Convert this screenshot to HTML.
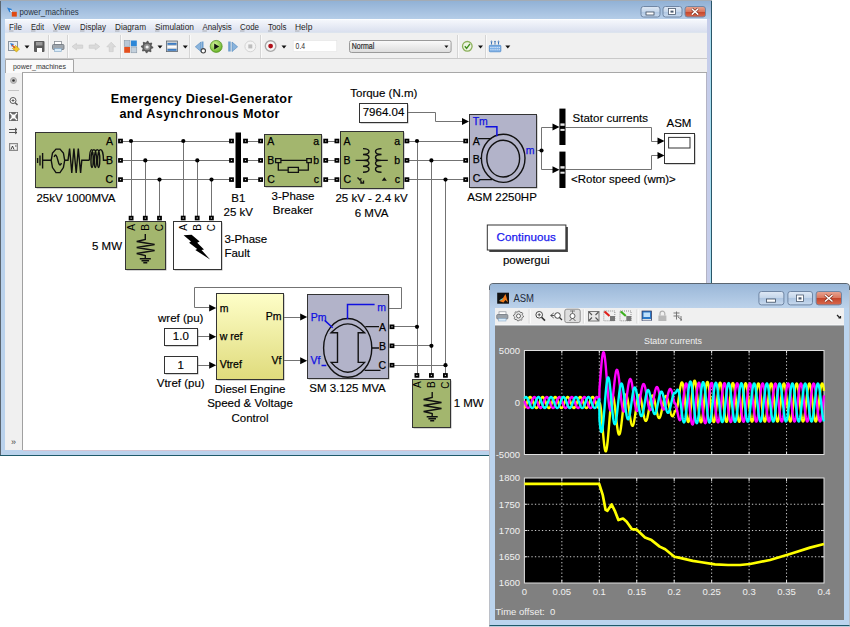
<!DOCTYPE html>
<html><head><meta charset="utf-8">
<style>
*{margin:0;padding:0}
html,body{width:850px;height:627px;overflow:hidden;background:#fff}
svg{position:absolute;left:0;top:0}
svg text{font-family:"Liberation Sans",sans-serif}
</style></head><body>
<svg width="850" height="627" viewBox="0 0 850 627">
<defs>
<linearGradient id="tg" x1="0" y1="0" x2="0" y2="1"><stop offset="0" stop-color="#91b1d5"/><stop offset="1" stop-color="#b5cde8"/></linearGradient>
<linearGradient id="mg" x1="0" y1="0" x2="0" y2="1"><stop offset="0" stop-color="#f7f9fd"/><stop offset="1" stop-color="#d9dfee"/></linearGradient>
<linearGradient id="bg" x1="0" y1="0" x2="0" y2="1"><stop offset="0" stop-color="#dfe9f5"/><stop offset="0.5" stop-color="#c3d5ea"/><stop offset="0.51" stop-color="#aec6e2"/><stop offset="1" stop-color="#c9daee"/></linearGradient>
<linearGradient id="rg" x1="0" y1="0" x2="0" y2="1"><stop offset="0" stop-color="#e9a693"/><stop offset="0.5" stop-color="#d9755c"/><stop offset="0.51" stop-color="#c4462b"/><stop offset="1" stop-color="#d96a4f"/></linearGradient>
<linearGradient id="cbg" x1="0" y1="0" x2="0" y2="1"><stop offset="0" stop-color="#fbfbfb"/><stop offset="1" stop-color="#dcdcdc"/></linearGradient>
<radialGradient id="grn" cx="0.4" cy="0.35" r="0.7"><stop offset="0" stop-color="#d8f5a0"/><stop offset="1" stop-color="#5fae1e"/></radialGradient>
</defs>
<rect x="0.5" y="0.5" width="711" height="455" fill="#bad2ec" stroke="#5b6671"/>
<line x1="0" y1="455.5" x2="712" y2="455.5" stroke="#1e5a6a"/>
<rect x="707" y="19" width="3.5" height="431" fill="#c6cdea"/><line x1="710.5" y1="19" x2="710.5" y2="455" stroke="#a6dcef"/><line x1="711.5" y1="0" x2="711.5" y2="456" stroke="#2a5568"/>
<rect x="1" y="1" width="710" height="18" fill="url(#tg)"/>
<line x1="0" y1="0.5" x2="712" y2="0.5" stroke="#a3abb4"/>
<path d="M7,7.5 L12,9 L9.5,12.5 Z" fill="#2a7fd4"/><line x1="10" y1="10" x2="13" y2="13" stroke="#fff" stroke-width="1"/><rect x="11.8" y="11.8" width="5" height="4.8" fill="#e04a12"/>
<text x="19.4" y="14.6" font-size="9.3" fill="#2a3440" text-anchor="start" font-weight="normal" textLength="59.4" lengthAdjust="spacingAndGlyphs" >power_machines</text>
<rect x="641.0" y="6.5" width="19.0" height="10.5" rx="2.5" fill="url(#bg)" stroke="#6f86a4"/>
<rect x="646" y="12" width="8" height="3" fill="#fff" stroke="#3b4a5e" stroke-width="0.8"/>
<rect x="663.0" y="6.5" width="19.0" height="10.5" rx="2.5" fill="url(#bg)" stroke="#6f86a4"/>
<rect x="668.5" y="8.5" width="7" height="6" fill="#fff" stroke="#4b5a6e" stroke-width="0.8"/><rect x="670.5" y="10.6" width="3" height="2" fill="#4b5a6e"/>
<rect x="685.0" y="6.5" width="20.5" height="10.5" rx="2.5" fill="url(#rg)" stroke="#6f86a4"/>
<path d="M691.8,8.8 L698.2,14.6 M698.2,8.8 L691.8,14.6" stroke="#7a3020" stroke-width="2.8"/><path d="M691.8,8.8 L698.2,14.6 M698.2,8.8 L691.8,14.6" stroke="#fff" stroke-width="1.5"/>
<rect x="5" y="19" width="702" height="13.5" fill="url(#mg)"/>
<line x1="5" y1="19.5" x2="707" y2="19.5" stroke="#fdfdfe"/>
<text x="9" y="29.8" font-size="9.6" fill="#262626" text-anchor="start" font-weight="normal" textLength="13" lengthAdjust="spacingAndGlyphs" >File</text>
<line x1="9" y1="31" x2="13.5" y2="31" stroke="#888" stroke-width="0.6"/>
<text x="31" y="29.8" font-size="9.6" fill="#262626" text-anchor="start" font-weight="normal" textLength="13" lengthAdjust="spacingAndGlyphs" >Edit</text>
<line x1="31" y1="31" x2="35.5" y2="31" stroke="#888" stroke-width="0.6"/>
<text x="53" y="29.8" font-size="9.6" fill="#262626" text-anchor="start" font-weight="normal" textLength="17" lengthAdjust="spacingAndGlyphs" >View</text>
<line x1="53" y1="31" x2="57.5" y2="31" stroke="#888" stroke-width="0.6"/>
<text x="80" y="29.8" font-size="9.6" fill="#262626" text-anchor="start" font-weight="normal" textLength="26" lengthAdjust="spacingAndGlyphs" >Display</text>
<line x1="80" y1="31" x2="84.5" y2="31" stroke="#888" stroke-width="0.6"/>
<text x="115" y="29.8" font-size="9.6" fill="#262626" text-anchor="start" font-weight="normal" textLength="31" lengthAdjust="spacingAndGlyphs" >Diagram</text>
<line x1="115" y1="31" x2="119.5" y2="31" stroke="#888" stroke-width="0.6"/>
<text x="155" y="29.8" font-size="9.6" fill="#262626" text-anchor="start" font-weight="normal" textLength="39" lengthAdjust="spacingAndGlyphs" >Simulation</text>
<line x1="155" y1="31" x2="159.5" y2="31" stroke="#888" stroke-width="0.6"/>
<text x="202.4" y="29.8" font-size="9.6" fill="#262626" text-anchor="start" font-weight="normal" textLength="29.3" lengthAdjust="spacingAndGlyphs" >Analysis</text>
<line x1="202.4" y1="31" x2="206.9" y2="31" stroke="#888" stroke-width="0.6"/>
<text x="240" y="29.8" font-size="9.6" fill="#262626" text-anchor="start" font-weight="normal" textLength="19" lengthAdjust="spacingAndGlyphs" >Code</text>
<line x1="240" y1="31" x2="244.5" y2="31" stroke="#888" stroke-width="0.6"/>
<text x="268" y="29.8" font-size="9.6" fill="#262626" text-anchor="start" font-weight="normal" textLength="18.4" lengthAdjust="spacingAndGlyphs" >Tools</text>
<line x1="268" y1="31" x2="272.5" y2="31" stroke="#888" stroke-width="0.6"/>
<text x="295" y="29.8" font-size="9.6" fill="#262626" text-anchor="start" font-weight="normal" textLength="17.4" lengthAdjust="spacingAndGlyphs" >Help</text>
<line x1="295" y1="31" x2="299.5" y2="31" stroke="#888" stroke-width="0.6"/>
<rect x="5" y="32.5" width="702" height="26.5" fill="#f0f0f0"/>
<line x1="5" y1="58.5" x2="707" y2="58.5" stroke="#c9c9c9"/>
<line x1="48.5" y1="35" x2="48.5" y2="58" stroke="#d5d5d5"/><line x1="49.5" y1="35" x2="49.5" y2="58" stroke="#fafafa"/>
<line x1="67.5" y1="35" x2="67.5" y2="58" stroke="#d5d5d5"/><line x1="68.5" y1="35" x2="68.5" y2="58" stroke="#fafafa"/>
<line x1="120.5" y1="35" x2="120.5" y2="58" stroke="#d5d5d5"/><line x1="121.5" y1="35" x2="121.5" y2="58" stroke="#fafafa"/>
<line x1="189.5" y1="35" x2="189.5" y2="58" stroke="#d5d5d5"/><line x1="190.5" y1="35" x2="190.5" y2="58" stroke="#fafafa"/>
<line x1="260.5" y1="35" x2="260.5" y2="58" stroke="#d5d5d5"/><line x1="261.5" y1="35" x2="261.5" y2="58" stroke="#fafafa"/>
<line x1="457.5" y1="35" x2="457.5" y2="58" stroke="#d5d5d5"/><line x1="458.5" y1="35" x2="458.5" y2="58" stroke="#fafafa"/>
<line x1="485.5" y1="35" x2="485.5" y2="58" stroke="#d5d5d5"/><line x1="486.5" y1="35" x2="486.5" y2="58" stroke="#fafafa"/>
<rect x="8.5" y="41.5" width="9" height="9" fill="#e8eef4" stroke="#8a949e"/><path d="M10,43 L14,44 L12,47 Z" fill="#2f7ed8"/><path d="M12.5,48.5 L15.5,45.5 L19.5,49 L16.5,52 Z" fill="#f2c92a" stroke="#b89210" stroke-width="0.6"/><path d="M12,45 L15,48" stroke="#d9532b" stroke-width="1.2"/>
<path d="M24.5,45.5 h5 l-2.5,3 Z" fill="#111"/>
<rect x="34" y="41" width="10.5" height="11" rx="1" fill="#5b5b5b"/><rect x="36" y="42" width="6.5" height="3.5" fill="#9a9a9a"/><rect x="37" y="48" width="5" height="4" fill="#fff"/>
<rect x="54.5" y="41.5" width="7" height="3.5" fill="#fff" stroke="#8a8f96" stroke-width="0.8"/><rect x="52.5" y="44.5" width="11.5" height="5" rx="1" fill="#9fa6ad" stroke="#6d747b" stroke-width="0.8"/><rect x="54.5" y="48.5" width="7" height="3" fill="#d7eaf8" stroke="#7fa3c4" stroke-width="0.6"/>
<path d="M72,46.6 L76.5,43.3 V45 H82.7 V48.3 H76.5 V50 Z" fill="#dadada" stroke="#c8c8c8" stroke-width="0.6"/>
<path d="M99.8,46.6 L95.3,43.3 V45 H89.2 V48.3 H95.3 V50 Z" fill="#dadada" stroke="#c8c8c8" stroke-width="0.6"/>
<path d="M111.2,42.2 L115.6,46.8 H113.2 V51.6 H109.2 V46.8 H106.8 Z" fill="#dadada" stroke="#c8c8c8" stroke-width="0.6"/>
<rect x="124.2" y="40.5" width="5.8" height="5.8" fill="#b9c7d6" stroke="#7d8c9c" stroke-width="0.5"/><rect x="131" y="40.5" width="5.8" height="5.8" fill="#2c87d8"/><rect x="124.2" y="47" width="5.8" height="5.8" fill="#e4501e"/><rect x="131" y="47" width="5.8" height="5.8" fill="#c3d0dc" stroke="#7d8c9c" stroke-width="0.5"/>
<polygon points="153.30,47.00 153.18,48.21 151.53,48.84 151.09,49.67 151.48,51.38 150.54,52.16 148.94,51.43 148.04,51.71 147.10,53.20 145.89,53.08 145.26,51.43 144.43,50.99 142.72,51.38 141.94,50.44 142.67,48.84 142.39,47.94 140.90,47.00 141.02,45.79 142.67,45.16 143.11,44.33 142.72,42.62 143.66,41.84 145.26,42.57 146.16,42.29 147.10,40.80 148.31,40.92 148.94,42.57 149.77,43.01 151.48,42.62 152.26,43.56 151.53,45.16 151.81,46.06" fill="#5a5a5a"/><circle cx="147.1" cy="47" r="3.2" fill="#8c8c8c"/><circle cx="147.1" cy="47" r="1.6" fill="#f0f0f0"/>
<path d="M157.5,45.5 h5 l-2.5,3 Z" fill="#111"/>
<rect x="166.5" y="41" width="11" height="10.6" fill="#c7cdd3" stroke="#5e6770" stroke-width="0.8"/><rect x="167.5" y="43" width="9" height="1.8" fill="#3d7cc2"/><rect x="167.5" y="46" width="9" height="1.8" fill="#fff"/><rect x="167.5" y="49" width="9" height="1.8" fill="#3d7cc2"/>
<path d="M182.8,45.5 h5 l-2.5,3 Z" fill="#111"/>
<path d="M195.3,46.8 L201,42 V51.6 Z" fill="#8ab4dc" stroke="#4f86bd" stroke-width="0.6"/><rect x="201.5" y="41.5" width="2" height="10" fill="#6e9fcf"/><circle cx="203.3" cy="50.8" r="2.2" fill="#fff" stroke="#444" stroke-width="1.1"/>
<circle cx="216.2" cy="46.4" r="6" fill="url(#grn)" stroke="#4d8c1a" stroke-width="0.7"/><path d="M214.2,43.4 L219.2,46.4 L214.2,49.4 Z" fill="#111"/>
<rect x="228.2" y="41.5" width="2.5" height="10" fill="#6e9fcf"/><path d="M237.6,46.8 L232,42 V51.6 Z" fill="#8ab4dc" stroke="#4f86bd" stroke-width="0.6"/>
<circle cx="250.3" cy="46.4" r="5.4" fill="#f4f4f4" stroke="#d4d4d4" stroke-width="1"/><rect x="248.3" y="44.4" width="4" height="4" fill="#bdbdbd"/>
<circle cx="270.6" cy="46.1" r="5.3" fill="#f6f6f6" stroke="#a8a8a8" stroke-width="1.4"/><circle cx="270.6" cy="46.1" r="2.4" fill="#b0101a"/>
<path d="M281.5,45.5 h5 l-2.5,3 Z" fill="#111"/>
<rect x="293.2" y="40.5" width="43.6" height="11.1" fill="#fff" stroke="#e3e3e3" stroke-width="0.6"/>
<text x="295.6" y="49.2" font-size="8.5" fill="#333" text-anchor="start" font-weight="normal" textLength="9.5" lengthAdjust="spacingAndGlyphs" >0.4</text>
<rect x="349.5" y="40.5" width="101.6" height="12" rx="2" fill="url(#cbg)" stroke="#9a9a9a"/>
<text x="351.8" y="49" font-size="9" fill="#2a2a2a" text-anchor="start" font-weight="normal" textLength="22.5" lengthAdjust="spacingAndGlyphs" stroke="#2a2a2a" stroke-width="0.2">Normal</text>
<path d="M444.4,45.5 h4 l-2,2.4 Z" fill="#111"/>
<circle cx="467.3" cy="46.3" r="4.8" fill="#eef4e4" stroke="#8bb05a" stroke-width="1.3"/><path d="M464.8,46.3 L466.6,48.3 L470,43.8" fill="none" stroke="#3f8f1c" stroke-width="1.4"/>
<path d="M478,45.5 h5 l-2.5,3 Z" fill="#111"/>
<rect x="489.3" y="45.3" width="11.6" height="6.5" rx="0.8" fill="#7fb0e6" stroke="#4a86c8" stroke-width="0.7"/><path d="M491.5,41.5 v3 M495,41.5 v3 M498.5,41.5 v3" stroke="#2a66b0" stroke-width="0.9"/><path d="M490.5,41.8 l1,-0.8 l1,0.8 M494,41.8 l1,-0.8 l1,0.8 M497.5,41.8 l1,-0.8 l1,0.8" stroke="#2a66b0" stroke-width="0.7" fill="none"/><path d="M490.3,47.5 h9.6 M490.3,49.7 h9.6" stroke="#f4f8fd" stroke-width="0.8" stroke-dasharray="1.2,0.9"/>
<path d="M505.3,45.5 h5 l-2.5,3 Z" fill="#111"/>
<rect x="5" y="59" width="702" height="13.5" fill="#f0f0f0"/>
<line x1="5" y1="72.5" x2="707" y2="72.5" stroke="#a5a5a5"/>
<rect x="5.5" y="59.5" width="68" height="13.5" fill="#fafafa"/><path d="M5.5,73 V59.5 H73.5 V72.5" fill="none" stroke="#a5a5a5"/>
<text x="12.9" y="68.5" font-size="8" fill="#333" text-anchor="start" font-weight="normal" textLength="53" lengthAdjust="spacingAndGlyphs" >power_machines</text>
<rect x="5" y="73" width="17" height="377" fill="#f0f0f0"/>
<line x1="22.5" y1="73" x2="22.5" y2="450" stroke="#a0a0a0"/>
<circle cx="13.5" cy="80.5" r="3" fill="#c4c4c4" stroke="#9a9a9a" stroke-width="0.8"/><circle cx="13.5" cy="80.5" r="1.3" fill="#333"/>
<line x1="8" y1="90.5" x2="19" y2="90.5" stroke="#c4c4c4"/>
<circle cx="13" cy="100.5" r="3" fill="#fff" stroke="#555" stroke-width="1"/><line x1="15.2" y1="102.7" x2="17.5" y2="105" stroke="#555" stroke-width="1.4"/><path d="M11.5,100.5 h3 M13,99 v3" stroke="#333" stroke-width="0.7"/>
<rect x="9" y="112" width="9" height="9" fill="#6a6a6a"/><rect x="11.5" y="114.5" width="4" height="4" fill="#fff"/><path d="M10,113 l2,2 M17,113 l-2,2 M10,120 l2,-2 M17,120 l-2,-2" stroke="#fff" stroke-width="1.2"/>
<path d="M9,129.5 h8 M9,132.5 h8 M15,128 l2,1.5 l-2,1.5 M15,131 l2,1.5 l-2,1.5" fill="none" stroke="#444" stroke-width="0.9"/>
<rect x="9" y="143" width="9" height="8" fill="#8a8a8a"/><rect x="10.2" y="144.2" width="6.6" height="5.6" fill="#f4f4f4"/><path d="M11,149.5 l1.5,-3.5 l1.5,3.5 M15,146 h1.5" fill="none" stroke="#333" stroke-width="0.9"/>
<text x="11" y="445" font-size="9" fill="#444" text-anchor="start" font-weight="normal" >&#187;</text>
<rect x="23" y="73" width="684" height="377" fill="#fff"/><line x1="706.5" y1="73" x2="706.5" y2="450" stroke="#b4b4c4"/><line x1="22" y1="72.5" x2="707" y2="72.5" stroke="#a8a8a8"/><line x1="23" y1="450.5" x2="707" y2="450.5" stroke="#d4c4d4"/>
<path d="M120.5,141.5 L231.5,141.5" fill="none" stroke="#737373" stroke-width="1"/>
<path d="M245.5,141.5 L260.5,141.5" fill="none" stroke="#737373" stroke-width="1"/>
<path d="M325.5,141.5 L336.5,141.5" fill="none" stroke="#737373" stroke-width="1"/>
<path d="M406.5,141.5 L465.5,141.5" fill="none" stroke="#737373" stroke-width="1"/>
<path d="M120.5,160.5 L231.5,160.5" fill="none" stroke="#737373" stroke-width="1"/>
<path d="M245.5,160.5 L260.5,160.5" fill="none" stroke="#737373" stroke-width="1"/>
<path d="M325.5,160.5 L336.5,160.5" fill="none" stroke="#737373" stroke-width="1"/>
<path d="M406.5,160.5 L465.5,160.5" fill="none" stroke="#737373" stroke-width="1"/>
<path d="M120.5,179.5 L231.5,179.5" fill="none" stroke="#737373" stroke-width="1"/>
<path d="M245.5,179.5 L260.5,179.5" fill="none" stroke="#737373" stroke-width="1"/>
<path d="M325.5,179.5 L336.5,179.5" fill="none" stroke="#737373" stroke-width="1"/>
<path d="M406.5,179.5 L465.5,179.5" fill="none" stroke="#737373" stroke-width="1"/>
<path d="M131.5,141.5 L131.5,218.5" fill="none" stroke="#737373" stroke-width="1"/>
<path d="M145.5,160.5 L145.5,218.5" fill="none" stroke="#737373" stroke-width="1"/>
<path d="M159.5,179.5 L159.5,218.5" fill="none" stroke="#737373" stroke-width="1"/>
<path d="M183.5,141.5 L183.5,218.5" fill="none" stroke="#737373" stroke-width="1"/>
<path d="M197.5,160.5 L197.5,218.5" fill="none" stroke="#737373" stroke-width="1"/>
<path d="M211.5,179.5 L211.5,218.5" fill="none" stroke="#737373" stroke-width="1"/>
<path d="M417.5,141.5 L417.5,375.5" fill="none" stroke="#737373" stroke-width="1"/>
<path d="M431.5,160.5 L431.5,375.5" fill="none" stroke="#737373" stroke-width="1"/>
<path d="M445.5,179.5 L445.5,375.5" fill="none" stroke="#737373" stroke-width="1"/>
<path d="M392.5,326.5 L417.5,326.5" fill="none" stroke="#737373" stroke-width="1"/>
<path d="M392.5,345.5 L431.5,345.5" fill="none" stroke="#737373" stroke-width="1"/>
<path d="M392.5,365.5 L445.5,365.5" fill="none" stroke="#737373" stroke-width="1"/>
<circle cx="131" cy="141" r="2.1" fill="#000"/>
<circle cx="145.3" cy="160.4" r="2.1" fill="#000"/>
<circle cx="159.5" cy="179.6" r="2.1" fill="#000"/>
<circle cx="183.3" cy="141" r="2.1" fill="#000"/>
<circle cx="197.3" cy="160.4" r="2.1" fill="#000"/>
<circle cx="211.5" cy="179.6" r="2.1" fill="#000"/>
<circle cx="417" cy="141" r="2.1" fill="#000"/>
<circle cx="431.4" cy="160.4" r="2.1" fill="#000"/>
<circle cx="445.5" cy="179.6" r="2.1" fill="#000"/>
<circle cx="417" cy="326.8" r="2.1" fill="#000"/>
<circle cx="431.4" cy="345.8" r="2.1" fill="#000"/>
<circle cx="445.5" cy="365.2" r="2.1" fill="#000"/>
<path d="M407.5,112.5 L435.5,112.5 L435.5,121.5 L462.5,121.5" fill="none" stroke="#737373" stroke-width="1"/>
<path d="M469,121.6 L462,118.1 L462,125.1 Z" fill="#000"/>
<path d="M537.5,150.5 L541.5,150.5" fill="none" stroke="#737373" stroke-width="1"/>
<path d="M541.5,127.5 L541.5,169.5" fill="none" stroke="#737373" stroke-width="1"/>
<path d="M541.5,127.5 L553.5,127.5" fill="none" stroke="#737373" stroke-width="1"/>
<path d="M559.5,127 L552.5,123.5 L552.5,130.5 Z" fill="#000"/>
<path d="M541.5,169.5 L553.5,169.5" fill="none" stroke="#737373" stroke-width="1"/>
<path d="M559.5,169.8 L552.5,166.3 L552.5,173.3 Z" fill="#000"/>
<circle cx="541.5" cy="150.5" r="2.1" fill="#000"/>
<path d="M565.5,127.5 L651.5,127.5 L651.5,141.5 L658.5,141.5" fill="none" stroke="#737373" stroke-width="1"/>
<path d="M664.5,141 L657.5,137.5 L657.5,144.5 Z" fill="#000"/>
<path d="M565.5,169.5 L651.5,169.5 L651.5,155.5 L658.5,155.5" fill="none" stroke="#737373" stroke-width="1"/>
<path d="M664.5,155.5 L657.5,152.0 L657.5,159.0 Z" fill="#000"/>
<path d="M388.5,308.5 L401.5,308.5 L401.5,287.5 L194.5,287.5 L194.5,307.5 L209.5,307.5" fill="none" stroke="#737373" stroke-width="1"/>
<path d="M216.2,307.9 L209.2,304.4 L209.2,311.4 Z" fill="#000"/>
<path d="M197.5,336.5 L209.5,336.5" fill="none" stroke="#737373" stroke-width="1"/>
<path d="M216.2,336.7 L209.2,333.2 L209.2,340.2 Z" fill="#000"/>
<path d="M197.5,365.5 L209.5,365.5" fill="none" stroke="#737373" stroke-width="1"/>
<path d="M216.2,365.3 L209.2,361.8 L209.2,368.8 Z" fill="#000"/>
<path d="M283.5,317.5 L300.5,317.5" fill="none" stroke="#737373" stroke-width="1"/>
<path d="M307.2,317 L300.2,313.5 L300.2,320.5 Z" fill="#000"/>
<path d="M283.5,360.5 L300.5,360.5" fill="none" stroke="#737373" stroke-width="1"/>
<path d="M307.2,360.8 L300.2,357.3 L300.2,364.3 Z" fill="#000"/>
<rect x="36.5" y="133.5" width="81.0" height="55.0" fill="#777" opacity="0.6"/>
<rect x="35.5" y="132.5" width="81.0" height="55.0" fill="#a3b66e" stroke="#333" stroke-width="1" />
<rect x="118.1" y="138.7" width="4.8" height="4.6" fill="#000"/>
<rect x="119.9" y="140.4" width="1.2" height="1.2" fill="#ccc"/>
<rect x="118.1" y="158.1" width="4.8" height="4.6" fill="#000"/>
<rect x="119.9" y="159.8" width="1.2" height="1.2" fill="#ccc"/>
<rect x="118.1" y="177.29999999999998" width="4.8" height="4.6" fill="#000"/>
<rect x="119.9" y="179.0" width="1.2" height="1.2" fill="#ccc"/>
<text x="113" y="144.6" font-size="10.5" text-anchor="end" fill="#000" stroke="#000" stroke-width="0.25" font-weight="normal" >A</text>
<text x="113" y="163.8" font-size="10.5" text-anchor="end" fill="#000" stroke="#000" stroke-width="0.25" font-weight="normal" >B</text>
<text x="113" y="183" font-size="10.5" text-anchor="end" fill="#000" stroke="#000" stroke-width="0.25" font-weight="normal" >C</text>
<path d="M37.6,158 V163 M40,155.5 V165.5 M42.6,153 V168.5 M42.6,160.3 H51.2 M51.2,160.3 L52.5,153 L56,149.1 L60,149.1 L63.4,153 L64.7,160.3 L63.4,167.6 L60,172.6 L56,172.6 L52.5,167.6 Z M54.2,157 Q56,152 57.8,160 Q59.6,168 61.4,163 M64.7,160.3 H68 L69.6,148.5 L71.8,173 L73.9,148.5 L76.2,173 L78.3,148.5 L80.6,173 L81.8,160.3 H89.4 M89.4,160.3 C89.8,146 93.5,146 93.2,160.3 C93,170 90.8,170 91,160.3 C91.2,146 96.8,146 96.5,160.3 C96.3,170 94.1,170 94.3,160.3 C94.5,146 100.1,146 99.8,160.3 C99.6,170 97.4,170 97.6,160.3 C97.8,146 103.4,146 103.5,160.3 H107" fill="none" stroke="#111" stroke-width="1.4"/>
<text x="76" y="202" font-size="11.5" text-anchor="middle" fill="#000" stroke="#000" stroke-width="0.15" font-weight="normal" >25kV 1000MVA</text>
<rect x="235.5" y="132.5" width="5.5" height="55.5" fill="#000"/>
<rect x="229.1" y="138.7" width="4.8" height="4.6" fill="#000"/>
<rect x="230.9" y="140.4" width="1.2" height="1.2" fill="#ccc"/>
<rect x="243.1" y="138.7" width="4.8" height="4.6" fill="#000"/>
<rect x="244.9" y="140.4" width="1.2" height="1.2" fill="#ccc"/>
<rect x="229.1" y="158.1" width="4.8" height="4.6" fill="#000"/>
<rect x="230.9" y="159.8" width="1.2" height="1.2" fill="#ccc"/>
<rect x="243.1" y="158.1" width="4.8" height="4.6" fill="#000"/>
<rect x="244.9" y="159.8" width="1.2" height="1.2" fill="#ccc"/>
<rect x="229.1" y="177.29999999999998" width="4.8" height="4.6" fill="#000"/>
<rect x="230.9" y="179.0" width="1.2" height="1.2" fill="#ccc"/>
<rect x="243.1" y="177.29999999999998" width="4.8" height="4.6" fill="#000"/>
<rect x="244.9" y="179.0" width="1.2" height="1.2" fill="#ccc"/>
<text x="238.3" y="202" font-size="11.5" text-anchor="middle" fill="#000" stroke="#000" stroke-width="0.15" font-weight="normal" >B1</text>
<text x="238.3" y="216" font-size="11.5" text-anchor="middle" fill="#000" stroke="#000" stroke-width="0.15" font-weight="normal" >25 kV</text>
<rect x="265.5" y="135.5" width="57.0" height="52.0" fill="#777" opacity="0.6"/>
<rect x="264.5" y="134.5" width="57.0" height="52.0" fill="#a3b66e" stroke="#333" stroke-width="1" />
<rect x="258.20000000000005" y="138.7" width="4.8" height="4.6" fill="#000"/>
<rect x="260.0" y="140.4" width="1.2" height="1.2" fill="#ccc"/>
<rect x="323.3" y="138.7" width="4.8" height="4.6" fill="#000"/>
<rect x="325.09999999999997" y="140.4" width="1.2" height="1.2" fill="#ccc"/>
<rect x="258.20000000000005" y="158.1" width="4.8" height="4.6" fill="#000"/>
<rect x="260.0" y="159.8" width="1.2" height="1.2" fill="#ccc"/>
<rect x="323.3" y="158.1" width="4.8" height="4.6" fill="#000"/>
<rect x="325.09999999999997" y="159.8" width="1.2" height="1.2" fill="#ccc"/>
<rect x="258.20000000000005" y="177.29999999999998" width="4.8" height="4.6" fill="#000"/>
<rect x="260.0" y="179.0" width="1.2" height="1.2" fill="#ccc"/>
<rect x="323.3" y="177.29999999999998" width="4.8" height="4.6" fill="#000"/>
<rect x="325.09999999999997" y="179.0" width="1.2" height="1.2" fill="#ccc"/>
<text x="267.3" y="144.6" font-size="10.5" text-anchor="start" fill="#000" stroke="#000" stroke-width="0.25" font-weight="normal" >A</text>
<text x="267.3" y="163.7" font-size="10.5" text-anchor="start" fill="#000" stroke="#000" stroke-width="0.25" font-weight="normal" >B</text>
<text x="267.3" y="182.8" font-size="10.5" text-anchor="start" fill="#000" stroke="#000" stroke-width="0.25" font-weight="normal" >C</text>
<text x="319" y="144.6" font-size="10.5" text-anchor="end" fill="#000" stroke="#000" stroke-width="0.25" font-weight="normal" >a</text>
<text x="319" y="163.7" font-size="10.5" text-anchor="end" fill="#000" stroke="#000" stroke-width="0.25" font-weight="normal" >b</text>
<text x="319" y="182.8" font-size="10.5" text-anchor="end" fill="#000" stroke="#000" stroke-width="0.25" font-weight="normal" >c</text>
<path d="M275.6,158.7 h5.3 v4 h-5.3 Z M306.8,158.7 h4.5 v4 h-4.5 Z M280.9,160.4 H306.8 M278.3,162.7 V170.2 H288.2 M298.4,170.2 H308.3 V162.7 M288.2,167.4 h10.2 v5 h-10.2 Z" fill="none" stroke="#111" stroke-width="1.3"/>
<text x="293" y="199.6" font-size="11.5" text-anchor="middle" fill="#000" stroke="#000" stroke-width="0.15" font-weight="normal" >3-Phase</text>
<text x="293" y="213.6" font-size="11.5" text-anchor="middle" fill="#000" stroke="#000" stroke-width="0.15" font-weight="normal" >Breaker</text>
<rect x="341.5" y="132.5" width="63.0" height="57.0" fill="#777" opacity="0.6"/>
<rect x="340.5" y="131.5" width="63.0" height="57.0" fill="#a3b66e" stroke="#333" stroke-width="1" />
<rect x="334.5" y="138.7" width="4.8" height="4.6" fill="#000"/>
<rect x="336.29999999999995" y="140.4" width="1.2" height="1.2" fill="#ccc"/>
<rect x="404.5" y="138.7" width="4.8" height="4.6" fill="#000"/>
<rect x="406.29999999999995" y="140.4" width="1.2" height="1.2" fill="#ccc"/>
<rect x="334.5" y="158.1" width="4.8" height="4.6" fill="#000"/>
<rect x="336.29999999999995" y="159.8" width="1.2" height="1.2" fill="#ccc"/>
<rect x="404.5" y="158.1" width="4.8" height="4.6" fill="#000"/>
<rect x="406.29999999999995" y="159.8" width="1.2" height="1.2" fill="#ccc"/>
<rect x="334.5" y="177.29999999999998" width="4.8" height="4.6" fill="#000"/>
<rect x="336.29999999999995" y="179.0" width="1.2" height="1.2" fill="#ccc"/>
<rect x="404.5" y="177.29999999999998" width="4.8" height="4.6" fill="#000"/>
<rect x="406.29999999999995" y="179.0" width="1.2" height="1.2" fill="#ccc"/>
<text x="343.5" y="144.6" font-size="10.5" text-anchor="start" fill="#000" stroke="#000" stroke-width="0.25" font-weight="normal" >A</text>
<text x="343.5" y="163.7" font-size="10.5" text-anchor="start" fill="#000" stroke="#000" stroke-width="0.25" font-weight="normal" >B</text>
<text x="343.5" y="182.8" font-size="10.5" text-anchor="start" fill="#000" stroke="#000" stroke-width="0.25" font-weight="normal" >C</text>
<text x="400" y="144.6" font-size="10.5" text-anchor="end" fill="#000" stroke="#000" stroke-width="0.25" font-weight="normal" >a</text>
<text x="400" y="163.7" font-size="10.5" text-anchor="end" fill="#000" stroke="#000" stroke-width="0.25" font-weight="normal" >b</text>
<text x="400" y="182.8" font-size="10.5" text-anchor="end" fill="#000" stroke="#000" stroke-width="0.25" font-weight="normal" >c</text>
<path d="M363,148.6 C371,148.6 371,154.5 363,154.5 C371,154.5 371,160.4 363,160.4 C371,160.4 371,166.3 363,166.3 C371,166.3 371,172.2 363,172.2 M381.5,148.6 C373.5,148.6 373.5,154.5 381.5,154.5 C373.5,154.5 373.5,160.4 381.5,160.4 C373.5,160.4 373.5,166.3 381.5,166.3 C373.5,166.3 373.5,172.2 381.5,172.2 M355.6,160.4 H368.5 M375.5,160.4 H387.8" fill="none" stroke="#111" stroke-width="1.4"/>
<path d="M357.5,177.5 l3,3 M359,180 l2.5,-1.5 M361,180.5 v2.5 h2.5 v-2.5" fill="none" stroke="#111" stroke-width="1.4"/>
<path d="M381.8,180.8 L384.3,177.2 L386.8,180.8 Z" fill="#111"/>
<text x="371.6" y="202.4" font-size="11.5" text-anchor="middle" fill="#000" stroke="#000" stroke-width="0.15" font-weight="normal" >25 kV - 2.4 kV</text>
<text x="371.6" y="217" font-size="11.5" text-anchor="middle" fill="#000" stroke="#000" stroke-width="0.15" font-weight="normal" >6 MVA</text>
<rect x="360.5" y="104.5" width="48.0" height="19.0" fill="#777" opacity="0.6"/>
<rect x="359.5" y="103.5" width="48.0" height="19.0" fill="#fff" stroke="#333" stroke-width="1" />
<text x="383.5" y="115.8" font-size="11.5" text-anchor="middle" fill="#000" stroke="#000" stroke-width="0.15" font-weight="normal" >7964.04</text>
<text x="383.8" y="96.6" font-size="11.5" text-anchor="middle" fill="#000" stroke="#000" stroke-width="0.15" font-weight="normal" >Torque (N.m)</text>
<rect x="470.5" y="115.5" width="67.0" height="73.0" fill="#777" opacity="0.6"/>
<rect x="469.5" y="114.5" width="67.0" height="73.0" fill="#b2b3c9" stroke="#333" stroke-width="1" />
<rect x="463.3" y="138.7" width="4.8" height="4.6" fill="#000"/>
<rect x="465.09999999999997" y="140.4" width="1.2" height="1.2" fill="#ccc"/>
<rect x="463.3" y="158.1" width="4.8" height="4.6" fill="#000"/>
<rect x="465.09999999999997" y="159.8" width="1.2" height="1.2" fill="#ccc"/>
<rect x="463.3" y="177.29999999999998" width="4.8" height="4.6" fill="#000"/>
<rect x="465.09999999999997" y="179.0" width="1.2" height="1.2" fill="#ccc"/>
<ellipse cx="503.2" cy="158.3" rx="21.8" ry="24.1" fill="none" stroke="#111" stroke-width="1.4"/>
<ellipse cx="503.2" cy="158.6" rx="16.4" ry="18.4" fill="none" stroke="#111" stroke-width="1.4"/>
<path d="M478.1,138.6 H491.5 M480,158.3 H481.4 M479.4,179.7 H492.2" fill="none" stroke="#111" stroke-width="1.3"/>
<path d="M485.5,126.8 H496.9 V136.2" fill="none" stroke="#1010e0" stroke-width="1.5"/>
<text x="472.7" y="125.4" font-size="10.5" text-anchor="start" fill="#1010e0" stroke="#1010e0" stroke-width="0.25" font-weight="normal" >Tm</text>
<text x="472.7" y="144.9" font-size="10.5" text-anchor="start" fill="#000" stroke="#000" stroke-width="0.25" font-weight="normal" >A</text>
<text x="472.7" y="163.2" font-size="10.5" text-anchor="start" fill="#000" stroke="#000" stroke-width="0.25" font-weight="normal" >B</text>
<text x="472.7" y="182.4" font-size="10.5" text-anchor="start" fill="#000" stroke="#000" stroke-width="0.25" font-weight="normal" >C</text>
<text x="534.5" y="153.6" font-size="10.5" text-anchor="end" fill="#1010e0" stroke="#1010e0" stroke-width="0.25" font-weight="normal" >m</text>
<text x="502" y="201" font-size="11.5" text-anchor="middle" fill="#000" stroke="#000" stroke-width="0.15" font-weight="normal" >ASM 2250HP</text>
<rect x="559.4" y="108.6" width="6.1" height="36.4" fill="#000"/>
<rect x="559.4" y="151.6" width="6.1" height="36.4" fill="#000"/>
<rect x="560.4" y="123.4" width="4.2" height="2.4" fill="#e8e8e8"/>
<rect x="560.4" y="128.9" width="4.2" height="2.0" fill="#e8e8e8"/>
<rect x="560.4" y="166.20000000000002" width="4.2" height="2.4" fill="#e8e8e8"/>
<rect x="560.4" y="171.70000000000002" width="4.2" height="2.0" fill="#e8e8e8"/>
<text x="572.6" y="121.6" font-size="11.5" text-anchor="start" fill="#000" stroke="#000" stroke-width="0.15" font-weight="normal" >Stator currents</text>
<text x="571" y="183" font-size="11.5" text-anchor="start" fill="#000" stroke="#000" stroke-width="0.15" font-weight="normal" >&lt;Rotor speed (wm)&gt;</text>
<rect x="665.5" y="134.5" width="30.0" height="30.0" fill="#777" opacity="0.6"/>
<rect x="664.5" y="133.5" width="30.0" height="30.0" fill="#fff" stroke="#333" stroke-width="1" />
<rect x="668.6" y="137.4" width="21.4" height="10.6" fill="#fff" stroke="#333" stroke-width="1"/>
<text x="679" y="127.4" font-size="11.5" text-anchor="middle" fill="#000" stroke="#000" stroke-width="0.15" font-weight="normal" >ASM</text>
<rect x="489.3" y="227" width="78.6" height="25" fill="#444"/>
<rect x="487.3" y="225" width="78.6" height="25" fill="#fff" stroke="#333" stroke-width="1"/>
<text x="496.5" y="241" font-size="11.6" text-anchor="start" fill="#1a1aee" stroke="#1a1aee" stroke-width="0.25" font-weight="normal" textLength="59.4" lengthAdjust="spacing">Continuous</text>
<text x="526.3" y="263.7" font-size="11.5" text-anchor="middle" fill="#000" stroke="#000" stroke-width="0.15" font-weight="normal" >powergui</text>
<rect x="126.5" y="222.5" width="40.0" height="48.0" fill="#777" opacity="0.6"/>
<rect x="125.5" y="221.5" width="40.0" height="48.0" fill="#a3b66e" stroke="#333" stroke-width="1" />
<rect x="128.7" y="215.79999999999998" width="4.8" height="4.6" fill="#000"/>
<rect x="130.5" y="217.5" width="1.2" height="1.2" fill="#ccc"/>
<rect x="142.9" y="215.79999999999998" width="4.8" height="4.6" fill="#000"/>
<rect x="144.70000000000002" y="217.5" width="1.2" height="1.2" fill="#ccc"/>
<rect x="157.1" y="215.79999999999998" width="4.8" height="4.6" fill="#000"/>
<rect x="158.9" y="217.5" width="1.2" height="1.2" fill="#ccc"/>
<text transform="translate(134.7,224.1) rotate(-90)" font-size="10" text-anchor="end" fill="#000">A</text>
<text transform="translate(148.9,224.1) rotate(-90)" font-size="10" text-anchor="end" fill="#000">B</text>
<text transform="translate(163.1,224.1) rotate(-90)" font-size="10" text-anchor="end" fill="#000">C</text>
<path d="M145.3,234 V239.5 L136.70000000000002,241.5 L154.60000000000002,244.5 L136.70000000000002,247.5 L154.60000000000002,250.5 L136.70000000000002,253.5 L145.3,255.5 V258.3 M139.8,258.8 H150.8 M141.5,260.8 H149.10000000000002 M143.3,262.8 H147.3" fill="none" stroke="#111" stroke-width="1.4"/>
<text x="122" y="250" font-size="11.5" text-anchor="end" fill="#000" stroke="#000" stroke-width="0.15" font-weight="normal" >5 MW</text>
<rect x="174.5" y="222.5" width="48.0" height="48.0" fill="#777" opacity="0.6"/>
<rect x="173.5" y="221.5" width="48.0" height="48.0" fill="#fff" stroke="#333" stroke-width="1" />
<rect x="180.79999999999998" y="215.7" width="4.8" height="4.6" fill="#000"/>
<rect x="182.6" y="217.4" width="1.2" height="1.2" fill="#ccc"/>
<rect x="194.79999999999998" y="215.7" width="4.8" height="4.6" fill="#000"/>
<rect x="196.6" y="217.4" width="1.2" height="1.2" fill="#ccc"/>
<rect x="209.0" y="215.7" width="4.8" height="4.6" fill="#000"/>
<rect x="210.8" y="217.4" width="1.2" height="1.2" fill="#ccc"/>
<text transform="translate(186.79999999999998,224.1) rotate(-90)" font-size="10" text-anchor="end" fill="#000">A</text>
<text transform="translate(200.79999999999998,224.1) rotate(-90)" font-size="10" text-anchor="end" fill="#000">B</text>
<text transform="translate(215.0,224.1) rotate(-90)" font-size="10" text-anchor="end" fill="#000">C</text>
<path d="M183.6,235.3 L191.6,234.7 L199.6,241.5 L197.2,242.7 L204,249.5 L201.5,250.1 L210.1,259.4 L195.3,250.1 L197.2,248.9 L189.1,242.7 L191,241.5 Z" fill="#000"/>
<text x="224.4" y="243" font-size="11.5" text-anchor="start" fill="#000" stroke="#000" stroke-width="0.15" font-weight="normal" >3-Phase</text>
<text x="224.4" y="257" font-size="11.5" text-anchor="start" fill="#000" stroke="#000" stroke-width="0.15" font-weight="normal" >Fault</text>
<defs><linearGradient id="yg" x1="0" y1="0" x2="0" y2="1"><stop offset="0" stop-color="#fefec8"/><stop offset="1" stop-color="#dfdb7c"/></linearGradient></defs>
<rect x="217.5" y="294.5" width="67.0" height="86.0" fill="#777" opacity="0.6"/>
<rect x="216.5" y="293.5" width="67.0" height="86.0" fill="url(#yg)" stroke="#333" stroke-width="1" />
<text x="219.7" y="311.5" font-size="10.5" text-anchor="start" fill="#000" stroke="#000" stroke-width="0.25" font-weight="normal" >m</text>
<text x="219.7" y="339.7" font-size="10.5" text-anchor="start" fill="#000" stroke="#000" stroke-width="0.25" font-weight="normal" >w ref</text>
<text x="219.7" y="368.3" font-size="10.5" text-anchor="start" fill="#000" stroke="#000" stroke-width="0.25" font-weight="normal" >Vtref</text>
<text x="281.5" y="320.3" font-size="10.5" text-anchor="end" fill="#000" stroke="#000" stroke-width="0.25" font-weight="normal" >Pm</text>
<text x="281.5" y="363.5" font-size="10.5" text-anchor="end" fill="#000" stroke="#000" stroke-width="0.25" font-weight="normal" >Vf</text>
<text x="250" y="392.6" font-size="11.5" text-anchor="middle" fill="#000" stroke="#000" stroke-width="0.15" font-weight="normal" >Diesel Engine</text>
<text x="250" y="407" font-size="11.5" text-anchor="middle" fill="#000" stroke="#000" stroke-width="0.15" font-weight="normal" >Speed &amp; Voltage</text>
<text x="250" y="421.5" font-size="11.5" text-anchor="middle" fill="#000" stroke="#000" stroke-width="0.15" font-weight="normal" >Control</text>
<rect x="165.5" y="329.5" width="33.0" height="17.0" fill="#777" opacity="0.6"/>
<rect x="164.5" y="328.5" width="33.0" height="17.0" fill="#fff" stroke="#333" stroke-width="1" />
<text x="180.8" y="339.9" font-size="11.5" text-anchor="middle" fill="#000" stroke="#000" stroke-width="0.15" font-weight="normal" >1.0</text>
<rect x="165.5" y="357.5" width="33.0" height="17.0" fill="#777" opacity="0.6"/>
<rect x="164.5" y="356.5" width="33.0" height="17.0" fill="#fff" stroke="#333" stroke-width="1" />
<text x="180.8" y="368.5" font-size="11.5" text-anchor="middle" fill="#000" stroke="#000" stroke-width="0.15" font-weight="normal" >1</text>
<text x="180.7" y="322" font-size="11.5" text-anchor="middle" fill="#000" stroke="#000" stroke-width="0.15" font-weight="normal" >wref (pu)</text>
<text x="180.7" y="387" font-size="11.5" text-anchor="middle" fill="#000" stroke="#000" stroke-width="0.15" font-weight="normal" >Vtref (pu)</text>
<rect x="308.5" y="295.5" width="81.0" height="84.0" fill="#777" opacity="0.6"/>
<rect x="307.5" y="294.5" width="81.0" height="84.0" fill="#b2b3c9" stroke="#333" stroke-width="1" />
<rect x="389.6" y="324.5" width="4.8" height="4.6" fill="#000"/>
<rect x="391.4" y="326.2" width="1.2" height="1.2" fill="#ccc"/>
<rect x="389.6" y="343.5" width="4.8" height="4.6" fill="#000"/>
<rect x="391.4" y="345.2" width="1.2" height="1.2" fill="#ccc"/>
<rect x="389.6" y="362.9" width="4.8" height="4.6" fill="#000"/>
<rect x="391.4" y="364.59999999999997" width="1.2" height="1.2" fill="#ccc"/>
<ellipse cx="347.7" cy="347.9" rx="24.1" ry="29.4" fill="none" stroke="#111" stroke-width="1.4"/>
<path d="M331.1,332.8 Q347.7,315 364.6,332.8 L358.2,332.8 L358.2,362.4 L364.6,362.4 Q347.7,382 331.1,362.4 L337.5,362.4 L337.5,332.8 Z" fill="none" stroke="#111" stroke-width="1.4"/>
<path d="M365.4,326.6 H379 M371.8,348 H379 M364.6,370.3 H380.5" fill="none" stroke="#111" stroke-width="1.3"/>
<path d="M324.7,320.4 L332.7,327.7 M321.5,365.5 H326.3 M347.5,319.3 V304.5 H374.6" fill="none" stroke="#1010e0" stroke-width="1.5"/>
<text x="310.8" y="320.9" font-size="10.5" text-anchor="start" fill="#1010e0" stroke="#1010e0" stroke-width="0.25" font-weight="normal" >Pm</text>
<text x="310.4" y="364" font-size="10.5" text-anchor="start" fill="#1010e0" stroke="#1010e0" stroke-width="0.25" font-weight="normal" >Vf</text>
<text x="386" y="311.3" font-size="10.5" text-anchor="end" fill="#1010e0" stroke="#1010e0" stroke-width="0.25" font-weight="normal" >m</text>
<text x="386" y="330.5" font-size="10.5" text-anchor="end" fill="#000" stroke="#000" stroke-width="0.25" font-weight="normal" >A</text>
<text x="386" y="349.6" font-size="10.5" text-anchor="end" fill="#000" stroke="#000" stroke-width="0.25" font-weight="normal" >B</text>
<text x="386" y="368.7" font-size="10.5" text-anchor="end" fill="#000" stroke="#000" stroke-width="0.25" font-weight="normal" >C</text>
<text x="347.5" y="392" font-size="11.5" text-anchor="middle" fill="#000" stroke="#000" stroke-width="0.15" font-weight="normal" >SM 3.125 MVA</text>
<rect x="413.5" y="380.5" width="38.0" height="48.0" fill="#777" opacity="0.6"/>
<rect x="412.5" y="379.5" width="38.0" height="48.0" fill="#a3b66e" stroke="#333" stroke-width="1" />
<rect x="414.5" y="373.09999999999997" width="4.8" height="4.6" fill="#000"/>
<rect x="416.29999999999995" y="374.79999999999995" width="1.2" height="1.2" fill="#ccc"/>
<rect x="429.0" y="373.09999999999997" width="4.8" height="4.6" fill="#000"/>
<rect x="430.79999999999995" y="374.79999999999995" width="1.2" height="1.2" fill="#ccc"/>
<rect x="443.0" y="373.09999999999997" width="4.8" height="4.6" fill="#000"/>
<rect x="444.79999999999995" y="374.79999999999995" width="1.2" height="1.2" fill="#ccc"/>
<text transform="translate(420.5,381.4) rotate(-90)" font-size="10" text-anchor="end" fill="#000">A</text>
<text transform="translate(435.0,381.4) rotate(-90)" font-size="10" text-anchor="end" fill="#000">B</text>
<text transform="translate(449.0,381.4) rotate(-90)" font-size="10" text-anchor="end" fill="#000">C</text>
<path d="M432.2,392 V397.5 L423.59999999999997,399.5 L441.5,402.5 L423.59999999999997,405.5 L441.5,408.5 L423.59999999999997,411.5 L432.2,413.5 V416.3 M426.7,416.8 H437.7 M428.4,418.8 H436.0 M430.2,420.8 H434.2" fill="none" stroke="#111" stroke-width="1.4"/>
<text x="453.7" y="407" font-size="11.5" text-anchor="start" fill="#000" stroke="#000" stroke-width="0.15" font-weight="normal" >1 MW</text>
<text x="110.8" y="102.7" font-size="12.6" text-anchor="start" fill="#000" stroke="#000" stroke-width="0" font-weight="bold" textLength="181.5" lengthAdjust="spacing">Emergency Diesel-Generator</text>
<text x="119.4" y="117.7" font-size="12.6" text-anchor="start" fill="#000" stroke="#000" stroke-width="0" font-weight="bold" textLength="160" lengthAdjust="spacing">and Asynchronous Motor</text>
<defs>
<linearGradient id="stg" x1="0" y1="0" x2="0" y2="1"><stop offset="0" stop-color="#9ab7d8"/><stop offset="1" stop-color="#bcd2ea"/></linearGradient>
</defs>
<path d="M489.5,627 V287 Q489.5,283.5 493,283.5 H846 Q849.5,283.5 849.5,287 V627 Z" fill="#bbd4ee" stroke="#bcc0c8"/>
<path d="M489.5,290 V287 Q489.5,283.5 493,283.5 H846 Q849.5,283.5 849.5,287 V290" fill="none" stroke="#5b6671"/>
<path d="M490,308 V287.5 Q490,284 493.5,284 H845.5 Q849,284 849,287.5 V308 Z" fill="url(#stg)"/>
<line x1="489.5" y1="625.5" x2="849.5" y2="625.5" stroke="#1e5a6a" stroke-width="1.2"/>
<rect x="497.2" y="292.7" width="11.8" height="11" fill="#111"/><path d="M499,301 L503,298 L505.5,294 L508,302.5 L505.5,300 L503.5,302.5 Z" fill="#f07a1a"/><path d="M499,300.5 L503,298 L502,300 Z" fill="#3ad0e0"/>
<text x="513.4" y="302.4" font-size="10" fill="#1e2a3a" text-anchor="start" font-weight="normal" textLength="20.6" lengthAdjust="spacingAndGlyphs" >ASM</text>
<rect x="758.9" y="291.5" width="25.0" height="13.399999999999977" rx="2.5" fill="url(#bg)" stroke="#6f86a4"/>
<rect x="766.5" y="299" width="9" height="3.2" fill="#fff" stroke="#3b4a5e" stroke-width="0.8"/>
<rect x="787.9" y="291.5" width="24.600000000000023" height="13.399999999999977" rx="2.5" fill="url(#bg)" stroke="#6f86a4"/>
<rect x="796.5" y="295" width="7" height="6.5" fill="#fff" stroke="#4b5a6e" stroke-width="0.8"/><rect x="798.5" y="297.3" width="3" height="2.2" fill="#4b5a6e"/>
<rect x="816.1" y="291.5" width="25.399999999999977" height="13.399999999999977" rx="2.5" fill="url(#rg)" stroke="#6f86a4"/>
<path d="M825,295 L832.5,301.5 M832.5,295 L825,301.5" stroke="#7a3020" stroke-width="2.8"/><path d="M825,295 L832.5,301.5 M832.5,295 L825,301.5" stroke="#fff" stroke-width="1.5"/>
<rect x="495" y="308" width="349" height="17.5" fill="#f0f0f0"/>
<line x1="495" y1="325" x2="844" y2="325" stroke="#fafafa"/>
<line x1="529.2" y1="309.5" x2="529.2" y2="323.5" stroke="#d3d3d3"/><line x1="530.2" y1="309.5" x2="530.2" y2="323.5" stroke="#fff"/>
<line x1="583.3" y1="309.5" x2="583.3" y2="323.5" stroke="#d3d3d3"/><line x1="584.3" y1="309.5" x2="584.3" y2="323.5" stroke="#fff"/>
<line x1="637" y1="309.5" x2="637" y2="323.5" stroke="#d3d3d3"/><line x1="638" y1="309.5" x2="638" y2="323.5" stroke="#fff"/>
<rect x="499" y="311.8" width="7" height="3" fill="#fff" stroke="#8a8f96" stroke-width="0.7"/><rect x="496.7" y="314.5" width="11.2" height="4.5" rx="1" fill="#9aa1a8" stroke="#6d747b" stroke-width="0.7"/><rect x="498.5" y="318.5" width="7.5" height="2.5" fill="#d7eaf8" stroke="#7fa3c4" stroke-width="0.5"/>
<polygon points="523.50,316.00 523.40,316.98 522.29,317.57 521.91,318.28 522.04,319.54 521.28,320.16 520.07,319.79 519.30,320.02 518.50,321.00 517.52,320.90 516.93,319.79 516.22,319.41 514.96,319.54 514.34,318.78 514.71,317.57 514.48,316.80 513.50,316.00 513.60,315.02 514.71,314.43 515.09,313.72 514.96,312.46 515.72,311.84 516.93,312.21 517.70,311.98 518.50,311.00 519.48,311.10 520.07,312.21 520.78,312.59 522.04,312.46 522.66,313.22 522.29,314.43 522.52,315.20" fill="#e6e6e6" stroke="#555" stroke-width="0.8"/><circle cx="518.5" cy="316" r="2" fill="#fff" stroke="#555" stroke-width="0.9"/>
<circle cx="539.2" cy="314.8" r="3.3" fill="#fff" stroke="#444" stroke-width="1"/><path d="M541.6,317.2 L545,320.6" stroke="#333" stroke-width="1.6"/><path d="M537.6,314.8 h3.2 M539.2,313.2 v3.2" stroke="#333" stroke-width="0.8"/>
<path d="M550.7,315.5 l3,-2.5 M550.7,315.5 l3,2.5 M550.7,315.5 h3.5" stroke="#444" stroke-width="0.9" fill="none"/><circle cx="557.5" cy="315.5" r="2.8" fill="#fff" stroke="#444" stroke-width="1"/><path d="M559.5,317.5 l2.5,2.5" stroke="#333" stroke-width="1.3"/>
<rect x="564.8" y="309.2" width="15.4" height="13.4" rx="2" fill="#dedede" stroke="#8d8d8d" stroke-width="1"/><path d="M572.5,310.5 v3 M570,311 h5" stroke="#666" stroke-width="0.8"/><circle cx="572.5" cy="316" r="2.5" fill="#fff" stroke="#555" stroke-width="0.9"/><path d="M569.5,321 l3,-3 l3,3" fill="none" stroke="#555" stroke-width="0.9"/>
<rect x="588.5" y="311.5" width="10.5" height="9.5" fill="#e8e8e8" stroke="#777" stroke-width="1"/><path d="M589,312 l3,3 M598.5,312 l-3,3 M589,320.5 l3,-3 M598.5,320.5 l-3,-3" stroke="#555" stroke-width="1.1"/>
<rect x="603.8" y="311" width="11" height="9.8" fill="none" stroke="#777" stroke-width="0.8" stroke-dasharray="1,1"/><path d="M604.5,311.5 l5,4.5" stroke="#e0201a" stroke-width="2.2"/><rect x="610" y="316" width="5" height="5" fill="#777"/>
<rect x="620" y="311" width="11" height="9.8" fill="none" stroke="#777" stroke-width="0.8" stroke-dasharray="1,1"/><path d="M620.8,311.5 l5,4.5" stroke="#3cb01e" stroke-width="2.2"/><rect x="626.3" y="316" width="5" height="5" fill="#777"/>
<rect x="642" y="311" width="9.5" height="9.5" fill="#2a78c8" stroke="#335" stroke-width="0.7"/><rect x="643.5" y="312.5" width="6.5" height="4.5" fill="#bfe0fb"/><rect x="642.5" y="319" width="8.5" height="1.5" fill="#ddd"/>
<rect x="658.4" y="315.5" width="8" height="5.5" fill="#b8b8b8"/><path d="M660,315.5 v-2 a2.4,2.4 0 0 1 4.8,0 v2" fill="none" stroke="#b0b0b0" stroke-width="1.2"/>
<path d="M673.5,313 h6 M673.5,316 h6 M676.5,311.5 v8 M678,317 l4,3 M681,316 v5" stroke="#777" stroke-width="1" fill="none"/>
<path d="M837,315 l3,3 M838.5,318 h2 v-2" stroke="#222" stroke-width="1.2" fill="none"/>
<rect x="495" y="325.5" width="349" height="294.5" fill="#808080"/>
<rect x="524.4" y="350.5" width="299.6" height="104.0" fill="#000" stroke="#e0e0e0" stroke-width="1"/>
<rect x="524.4" y="478" width="299.6" height="105" fill="#000" stroke="#e0e0e0" stroke-width="1"/>
<line x1="561.85" y1="350.5" x2="561.85" y2="454.5" stroke="#c8c8c8" stroke-width="1" stroke-dasharray="1.3,2.2"/>
<line x1="561.85" y1="478" x2="561.85" y2="583" stroke="#c8c8c8" stroke-width="1" stroke-dasharray="1.3,2.2"/>
<line x1="599.3" y1="350.5" x2="599.3" y2="454.5" stroke="#c8c8c8" stroke-width="1" stroke-dasharray="1.3,2.2"/>
<line x1="599.3" y1="478" x2="599.3" y2="583" stroke="#c8c8c8" stroke-width="1" stroke-dasharray="1.3,2.2"/>
<line x1="636.75" y1="350.5" x2="636.75" y2="454.5" stroke="#c8c8c8" stroke-width="1" stroke-dasharray="1.3,2.2"/>
<line x1="636.75" y1="478" x2="636.75" y2="583" stroke="#c8c8c8" stroke-width="1" stroke-dasharray="1.3,2.2"/>
<line x1="674.2" y1="350.5" x2="674.2" y2="454.5" stroke="#c8c8c8" stroke-width="1" stroke-dasharray="1.3,2.2"/>
<line x1="674.2" y1="478" x2="674.2" y2="583" stroke="#c8c8c8" stroke-width="1" stroke-dasharray="1.3,2.2"/>
<line x1="711.65" y1="350.5" x2="711.65" y2="454.5" stroke="#c8c8c8" stroke-width="1" stroke-dasharray="1.3,2.2"/>
<line x1="711.65" y1="478" x2="711.65" y2="583" stroke="#c8c8c8" stroke-width="1" stroke-dasharray="1.3,2.2"/>
<line x1="749.1" y1="350.5" x2="749.1" y2="454.5" stroke="#c8c8c8" stroke-width="1" stroke-dasharray="1.3,2.2"/>
<line x1="749.1" y1="478" x2="749.1" y2="583" stroke="#c8c8c8" stroke-width="1" stroke-dasharray="1.3,2.2"/>
<line x1="786.55" y1="350.5" x2="786.55" y2="454.5" stroke="#c8c8c8" stroke-width="1" stroke-dasharray="1.3,2.2"/>
<line x1="786.55" y1="478" x2="786.55" y2="583" stroke="#c8c8c8" stroke-width="1" stroke-dasharray="1.3,2.2"/>
<line x1="561.85" y1="350.5" x2="561.85" y2="353.5" stroke="#e0e0e0" stroke-width="1"/>
<line x1="561.85" y1="451.5" x2="561.85" y2="454.5" stroke="#e0e0e0" stroke-width="1"/>
<line x1="561.85" y1="478" x2="561.85" y2="481" stroke="#e0e0e0" stroke-width="1"/>
<line x1="561.85" y1="580" x2="561.85" y2="583" stroke="#e0e0e0" stroke-width="1"/>
<line x1="599.3" y1="350.5" x2="599.3" y2="353.5" stroke="#e0e0e0" stroke-width="1"/>
<line x1="599.3" y1="451.5" x2="599.3" y2="454.5" stroke="#e0e0e0" stroke-width="1"/>
<line x1="599.3" y1="478" x2="599.3" y2="481" stroke="#e0e0e0" stroke-width="1"/>
<line x1="599.3" y1="580" x2="599.3" y2="583" stroke="#e0e0e0" stroke-width="1"/>
<line x1="636.75" y1="350.5" x2="636.75" y2="353.5" stroke="#e0e0e0" stroke-width="1"/>
<line x1="636.75" y1="451.5" x2="636.75" y2="454.5" stroke="#e0e0e0" stroke-width="1"/>
<line x1="636.75" y1="478" x2="636.75" y2="481" stroke="#e0e0e0" stroke-width="1"/>
<line x1="636.75" y1="580" x2="636.75" y2="583" stroke="#e0e0e0" stroke-width="1"/>
<line x1="674.2" y1="350.5" x2="674.2" y2="353.5" stroke="#e0e0e0" stroke-width="1"/>
<line x1="674.2" y1="451.5" x2="674.2" y2="454.5" stroke="#e0e0e0" stroke-width="1"/>
<line x1="674.2" y1="478" x2="674.2" y2="481" stroke="#e0e0e0" stroke-width="1"/>
<line x1="674.2" y1="580" x2="674.2" y2="583" stroke="#e0e0e0" stroke-width="1"/>
<line x1="711.65" y1="350.5" x2="711.65" y2="353.5" stroke="#e0e0e0" stroke-width="1"/>
<line x1="711.65" y1="451.5" x2="711.65" y2="454.5" stroke="#e0e0e0" stroke-width="1"/>
<line x1="711.65" y1="478" x2="711.65" y2="481" stroke="#e0e0e0" stroke-width="1"/>
<line x1="711.65" y1="580" x2="711.65" y2="583" stroke="#e0e0e0" stroke-width="1"/>
<line x1="749.1" y1="350.5" x2="749.1" y2="353.5" stroke="#e0e0e0" stroke-width="1"/>
<line x1="749.1" y1="451.5" x2="749.1" y2="454.5" stroke="#e0e0e0" stroke-width="1"/>
<line x1="749.1" y1="478" x2="749.1" y2="481" stroke="#e0e0e0" stroke-width="1"/>
<line x1="749.1" y1="580" x2="749.1" y2="583" stroke="#e0e0e0" stroke-width="1"/>
<line x1="786.55" y1="350.5" x2="786.55" y2="353.5" stroke="#e0e0e0" stroke-width="1"/>
<line x1="786.55" y1="451.5" x2="786.55" y2="454.5" stroke="#e0e0e0" stroke-width="1"/>
<line x1="786.55" y1="478" x2="786.55" y2="481" stroke="#e0e0e0" stroke-width="1"/>
<line x1="786.55" y1="580" x2="786.55" y2="583" stroke="#e0e0e0" stroke-width="1"/>
<line x1="524.4" y1="504.25" x2="527.4" y2="504.25" stroke="#e0e0e0" stroke-width="1"/><line x1="821" y1="504.25" x2="824" y2="504.25" stroke="#e0e0e0" stroke-width="1"/>
<line x1="524.4" y1="530.5" x2="527.4" y2="530.5" stroke="#e0e0e0" stroke-width="1"/><line x1="821" y1="530.5" x2="824" y2="530.5" stroke="#e0e0e0" stroke-width="1"/>
<line x1="524.4" y1="556.75" x2="527.4" y2="556.75" stroke="#e0e0e0" stroke-width="1"/><line x1="821" y1="556.75" x2="824" y2="556.75" stroke="#e0e0e0" stroke-width="1"/>
<line x1="524.4" y1="402.5" x2="527.4" y2="402.5" stroke="#e0e0e0" stroke-width="1"/><line x1="821" y1="402.5" x2="824" y2="402.5" stroke="#e0e0e0" stroke-width="1"/>
<line x1="524.4" y1="504.25" x2="824" y2="504.25" stroke="#c8c8c8" stroke-width="1" stroke-dasharray="1.3,2.2"/>
<line x1="524.4" y1="530.5" x2="824" y2="530.5" stroke="#c8c8c8" stroke-width="1" stroke-dasharray="1.3,2.2"/>
<line x1="524.4" y1="556.75" x2="824" y2="556.75" stroke="#c8c8c8" stroke-width="1" stroke-dasharray="1.3,2.2"/>
<polyline points="524.40,407.84 524.60,407.68 524.80,407.46 525.00,407.20 525.20,406.89 525.40,406.54 525.60,406.14 525.80,405.71 526.00,405.25 526.20,404.76 526.40,404.24 526.60,403.71 526.80,403.17 527.00,402.62 527.20,402.07 527.40,401.52 527.60,400.98 527.80,400.46 528.00,399.96 528.19,399.48 528.39,399.04 528.59,398.63 528.79,398.25 528.99,397.92 529.19,397.64 529.39,397.41 529.59,397.23 529.79,397.10 529.99,397.02 530.19,397.00 530.39,397.04 530.59,397.13 530.79,397.27 530.99,397.47 531.19,397.72 531.39,398.01 531.59,398.35 531.79,398.74 531.99,399.16 532.19,399.61 532.39,400.10 532.59,400.60 532.79,401.13 532.99,401.67 533.19,402.22 533.39,402.77 533.59,403.32 533.79,403.86 533.99,404.39 534.19,404.90 534.39,405.38 534.59,405.84 534.79,406.26 534.99,406.64 535.19,406.98 535.39,407.28 535.59,407.53 535.78,407.73 535.98,407.87 536.18,407.96 536.38,408.00 536.58,407.98 536.78,407.91 536.98,407.78 537.18,407.59 537.38,407.36 537.58,407.08 537.78,406.75 537.98,406.38 538.18,405.97 538.38,405.52 538.58,405.05 538.78,404.55 538.98,404.02 539.18,403.49 539.38,402.94 539.58,402.39 539.78,401.84 539.98,401.29 540.18,400.76 540.38,400.25 540.58,399.76 540.78,399.29 540.98,398.86 541.18,398.47 541.38,398.11 541.58,397.80 541.78,397.54 541.98,397.33 542.18,397.16 542.38,397.06 542.58,397.01 542.78,397.01 542.98,397.07 543.17,397.18 543.37,397.35 543.57,397.57 543.77,397.83 543.97,398.15 544.17,398.51 544.37,398.91 544.57,399.34 544.77,399.81 544.97,400.30 545.17,400.82 545.37,401.35 545.57,401.90 545.77,402.45 545.97,403.00 546.17,403.55 546.37,404.08 546.57,404.60 546.77,405.10 546.97,405.57 547.17,406.02 547.37,406.42 547.57,406.79 547.77,407.11 547.97,407.39 548.17,407.62 548.37,407.79 548.57,407.92 548.77,407.98 548.97,408.00 549.17,407.96 549.37,407.86 549.57,407.71 549.77,407.50 549.97,407.25 550.17,406.95 550.37,406.60 550.57,406.21 550.76,405.79 550.96,405.33 551.16,404.84 551.36,404.33 551.56,403.80 551.76,403.26 551.96,402.71 552.16,402.16 552.36,401.61 552.56,401.07 552.76,400.55 552.96,400.04 553.16,399.56 553.36,399.11 553.56,398.69 553.76,398.31 553.96,397.98 554.16,397.69 554.36,397.44 554.56,397.25 554.76,397.11 554.96,397.03 555.16,397.00 555.36,397.03 555.56,397.11 555.76,397.24 555.96,397.43 556.16,397.67 556.36,397.96 556.56,398.29 556.76,398.67 556.96,399.08 557.16,399.53 557.36,400.01 557.56,400.52 557.76,401.04 557.96,401.58 558.15,402.13 558.35,402.68 558.55,403.23 558.75,403.77 558.95,404.30 559.15,404.81 559.35,405.30 559.55,405.76 559.75,406.19 559.95,406.58 560.15,406.93 560.35,407.23 560.55,407.49 560.75,407.70 560.95,407.85 561.15,407.95 561.35,408.00 561.55,407.99 561.75,407.92 561.95,407.80 562.15,407.63 562.35,407.40 562.55,407.13 562.75,406.81 562.95,406.45 563.15,406.04 563.35,405.60 563.55,405.13 563.75,404.63 563.95,404.11 564.15,403.58 564.35,403.03 564.55,402.48 564.75,401.93 564.95,401.39 565.15,400.85 565.35,400.33 565.55,399.84 565.74,399.37 565.94,398.93 566.14,398.53 566.34,398.17 566.54,397.85 566.74,397.58 566.94,397.36 567.14,397.19 567.34,397.07 567.54,397.01 567.74,397.00 567.94,397.05 568.14,397.16 568.34,397.31 568.54,397.52 568.74,397.78 568.94,398.09 569.14,398.44 569.34,398.84 569.54,399.27 569.74,399.73 569.94,400.22 570.14,400.73 570.34,401.26 570.54,401.81 570.74,402.36 570.94,402.91 571.14,403.46 571.34,403.99 571.54,404.52 571.74,405.02 571.94,405.50 572.14,405.94 572.34,406.36 572.54,406.73 572.74,407.06 572.94,407.35 573.13,407.58 573.33,407.77 573.53,407.90 573.73,407.98 573.93,408.00 574.13,407.97 574.33,407.88 574.53,407.74 574.73,407.54 574.93,407.30 575.13,407.00 575.33,406.66 575.53,406.28 575.73,405.86 575.93,405.41 576.13,404.93 576.33,404.42 576.53,403.89 576.73,403.35 576.93,402.80 577.13,402.25 577.33,401.70 577.53,401.16 577.73,400.63 577.93,400.12 578.13,399.64 578.33,399.18 578.53,398.76 578.73,398.37 578.93,398.03 579.13,397.73 579.33,397.48 579.53,397.28 579.73,397.13 579.93,397.04 580.13,397.00 580.33,397.02 580.53,397.09 580.72,397.22 580.92,397.40 581.12,397.63 581.32,397.91 581.52,398.23 581.72,398.60 581.92,399.01 582.12,399.45 582.32,399.93 582.52,400.43 582.72,400.95 582.92,401.49 583.12,402.03 583.32,402.59 583.52,403.14 583.72,403.68 583.92,404.21 584.12,404.73 584.32,405.22 584.52,405.69 584.72,406.12 584.92,406.52 585.12,406.87 585.32,407.19 585.52,407.45 585.72,407.67 585.92,407.83 586.12,407.94 586.32,407.99 586.52,407.99 586.72,407.94 586.92,407.83 587.12,407.66 587.32,407.45 587.52,407.18 587.72,406.87 587.92,406.51 588.11,406.11 588.31,405.68 588.51,405.21 588.71,404.72 588.91,404.20 589.11,403.67 589.31,403.13 589.51,402.58 589.71,402.02 589.91,401.48 590.11,400.94 590.31,400.42 590.51,399.92 590.71,399.45 590.91,399.00 591.11,398.60 591.31,398.23 591.51,397.90 591.71,397.62 591.91,397.39 592.11,397.21 592.31,397.09 592.51,397.02 592.71,397.00 592.91,397.04 593.11,397.14 593.31,397.28 593.51,397.49 593.71,397.74 593.91,398.04 594.11,398.38 594.31,398.77 594.51,399.19 594.71,399.65 594.91,400.13 595.11,400.64 595.31,401.17 595.51,401.71 595.70,402.26 595.90,402.81 596.10,403.36 596.30,403.90 596.50,404.43 596.70,404.94 596.90,405.42 597.10,405.87 597.30,406.29 597.50,406.67 597.70,407.01 597.90,407.30 598.10,407.55 598.30,407.74 598.50,407.88 598.70,407.97 598.90,408.00 599.10,407.98 599.30,407.90 599.50,402.83 599.70,402.96 599.90,403.36 600.10,404.02 600.30,404.93 600.50,406.07 600.70,407.44 600.90,409.00 601.10,410.76 601.30,412.67 601.50,414.74 601.70,416.92 601.90,419.20 602.10,421.55 602.30,423.96 602.50,426.39 602.70,428.82 602.90,431.23 603.09,433.59 603.29,435.89 603.49,438.09 603.69,440.18 603.89,442.14 604.09,443.95 604.29,445.60 604.49,447.06 604.69,448.32 604.89,449.38 605.09,450.22 605.29,450.84 605.49,451.23 605.69,451.38 605.89,451.30 606.09,450.99 606.29,450.45 606.49,449.68 606.69,448.69 606.89,447.50 607.09,446.10 607.29,444.52 607.49,442.76 607.69,440.85 607.89,438.80 608.09,436.62 608.29,434.34 608.49,431.97 608.69,429.54 608.89,427.06 609.09,424.56 609.29,422.06 609.49,419.57 609.69,417.12 609.89,414.73 610.09,412.41 610.29,410.19 610.49,408.08 610.68,406.10 610.88,404.26 611.08,402.58 611.28,401.07 611.48,399.73 611.68,398.59 611.88,397.64 612.08,396.89 612.28,396.34 612.48,396.00 612.68,395.86 612.88,395.93 613.08,396.20 613.28,396.67 613.48,397.32 613.68,398.15 613.88,399.15 614.08,400.30 614.28,401.60 614.48,403.04 614.68,404.58 614.88,406.23 615.08,407.96 615.28,409.76 615.48,411.61 615.68,413.48 615.88,415.37 616.08,417.26 616.28,419.12 616.48,420.94 616.68,422.71 616.88,424.40 617.08,426.00 617.28,427.50 617.48,428.89 617.68,430.15 617.88,431.26 618.07,432.23 618.27,433.04 618.47,433.68 618.67,434.16 618.87,434.46 619.07,434.59 619.27,434.54 619.47,434.31 619.67,433.91 619.87,433.35 620.07,432.62 620.27,431.73 620.47,430.69 620.67,429.52 620.87,428.22 621.07,426.80 621.27,425.28 621.47,423.67 621.67,421.98 621.87,420.24 622.07,418.44 622.27,416.62 622.47,414.78 622.67,412.94 622.87,411.12 623.07,409.33 623.27,407.58 623.47,405.90 623.67,404.29 623.87,402.77 624.07,401.36 624.27,400.05 624.47,398.86 624.67,397.80 624.87,396.88 625.07,396.11 625.27,395.48 625.47,395.01 625.66,394.69 625.86,394.53 626.06,394.53 626.26,394.68 626.46,394.99 626.66,395.44 626.86,396.03 627.06,396.76 627.26,397.62 627.46,398.59 627.66,399.67 627.86,400.85 628.06,402.12 628.26,403.46 628.46,404.86 628.66,406.30 628.86,407.78 629.06,409.28 629.26,410.79 629.46,412.29 629.66,413.76 629.86,415.20 630.06,416.60 630.26,417.93 630.46,419.19 630.66,420.37 630.86,421.45 631.06,422.43 631.26,423.30 631.46,424.05 631.66,424.67 631.86,425.16 632.06,425.52 632.26,425.74 632.46,425.83 632.66,425.77 632.86,425.58 633.05,425.25 633.25,424.79 633.45,424.20 633.65,423.49 633.85,422.67 634.05,421.73 634.25,420.70 634.45,419.58 634.65,418.38 634.85,417.11 635.05,415.78 635.25,414.41 635.45,413.00 635.65,411.57 635.85,410.14 636.05,408.70 636.25,407.29 636.45,405.90 636.65,404.55 636.85,403.25 637.05,402.01 637.25,400.85 637.45,399.77 637.65,398.77 637.85,397.88 638.05,397.09 638.25,396.42 638.45,395.86 638.65,395.42 638.85,395.11 639.05,394.92 639.25,394.85 639.45,394.91 639.65,395.10 639.85,395.41 640.05,395.83 640.25,396.37 640.45,397.01 640.64,397.76 640.84,398.60 641.04,399.52 641.24,400.52 641.44,401.59 641.64,402.72 641.84,403.89 642.04,405.09 642.24,406.32 642.44,407.56 642.64,408.81 642.84,410.04 643.04,411.25 643.24,412.43 643.44,413.57 643.64,414.66 643.84,415.69 644.04,416.64 644.24,417.52 644.44,418.30 644.64,419.00 644.84,419.60 645.04,420.09 645.24,420.47 645.44,420.74 645.64,420.90 645.84,420.95 646.04,420.88 646.24,420.69 646.44,420.40 646.64,419.99 646.84,419.48 647.04,418.88 647.24,418.17 647.44,417.39 647.64,416.52 647.84,415.57 648.03,414.57 648.23,413.51 648.43,412.40 648.63,411.26 648.83,410.09 649.03,408.91 649.23,407.72 649.43,406.54 649.63,405.37 649.83,404.23 650.03,403.12 650.23,402.06 650.43,401.06 650.63,400.11 650.83,399.24 651.03,398.45 651.23,397.74 651.43,397.12 651.63,396.59 651.83,396.17 652.03,395.84 652.23,395.62 652.43,395.51 652.63,395.50 652.83,395.60 653.03,395.80 653.23,396.11 653.43,396.51 653.63,397.01 653.83,397.59 654.03,398.26 654.23,399.01 654.43,399.83 654.63,400.71 654.83,401.64 655.03,402.62 655.23,403.64 655.43,404.68 655.62,405.75 655.82,406.82 656.02,407.89 656.22,408.94 656.42,409.98 656.62,410.99 656.82,411.96 657.02,412.88 657.22,413.75 657.42,414.55 657.62,415.29 657.82,415.94 658.02,416.52 658.22,417.01 658.42,417.41 658.62,417.71 658.82,417.92 659.02,418.03 659.22,418.04 659.42,417.95 659.62,417.76 659.82,417.48 660.02,417.10 660.22,416.64 660.42,416.09 660.62,415.46 660.82,414.75 661.02,413.98 661.22,413.14 661.42,412.26 661.62,411.32 661.82,410.35 662.02,409.35 662.22,408.34 662.42,407.31 662.62,406.28 662.82,405.25 663.01,404.24 663.21,403.26 663.41,402.31 663.61,401.40 663.81,400.55 664.01,399.75 664.21,399.01 664.41,398.34 664.61,397.75 664.81,397.24 665.01,396.81 665.21,396.47 665.41,396.23 665.61,396.07 665.81,396.01 666.01,396.04 666.21,396.16 666.41,396.38 666.61,396.68 666.81,397.07 667.01,397.55 667.21,398.10 667.41,398.72 667.61,399.41 667.81,400.16 668.01,400.96 668.21,401.81 668.41,402.70 668.61,403.62 668.81,404.56 669.01,405.51 669.21,406.47 669.41,407.42 669.61,408.36 669.81,409.28 670.01,410.18 670.21,411.03 670.41,411.84 670.60,412.60 670.80,413.30 671.00,413.94 671.20,414.50 671.40,414.99 671.60,415.41 671.80,415.74 672.00,415.98 672.20,416.14 672.40,416.21 672.60,416.19 672.80,416.08 673.00,415.88 673.20,415.60 673.40,415.23 673.60,414.79 673.80,414.27 674.00,413.68 674.20,413.02 674.40,412.30 674.60,411.90 674.80,411.59 675.00,411.34 675.20,411.13 675.40,410.94 675.60,410.74 675.80,410.52 676.00,410.25 676.20,409.93 676.40,409.54 676.60,409.06 676.80,408.50 677.00,407.83 677.20,407.07 677.40,406.21 677.60,405.25 677.80,404.19 677.99,403.05 678.19,401.82 678.39,400.53 678.59,399.18 678.79,397.78 678.99,396.36 679.19,394.92 679.39,393.49 679.59,392.07 679.79,390.69 679.99,389.37 680.19,388.11 680.39,386.95 680.59,385.88 680.79,384.94 680.99,384.12 681.19,383.45 681.39,382.93 681.59,382.57 681.79,382.39 681.99,382.38 682.19,382.54 682.39,382.89 682.59,383.42 682.79,384.12 682.99,384.99 683.19,386.03 683.39,387.22 683.59,388.56 683.79,390.03 683.99,391.63 684.19,393.33 684.39,395.11 684.59,396.97 684.79,398.89 684.99,400.84 685.19,402.80 685.39,404.76 685.58,406.70 685.78,408.59 685.98,410.43 686.18,412.18 686.38,413.84 686.58,415.38 686.78,416.79 686.98,418.05 687.18,419.16 687.38,420.09 687.58,420.85 687.78,421.42 687.98,421.80 688.18,421.98 688.38,421.96 688.58,421.75 688.78,421.33 688.98,420.72 689.18,419.92 689.38,418.94 689.58,417.79 689.78,416.48 689.98,415.02 690.18,413.43 690.38,411.72 690.58,409.90 690.78,408.01 690.98,406.05 691.18,404.04 691.38,402.01 691.58,399.96 691.78,397.94 691.98,395.94 692.18,394.00 692.38,392.13 692.58,390.35 692.78,388.68 692.97,387.13 693.17,385.71 693.37,384.46 693.57,383.36 693.77,382.44 693.97,381.70 694.17,381.16 694.37,380.81 694.57,380.66 694.77,380.71 694.97,380.97 695.17,381.42 695.37,382.06 695.57,382.89 695.77,383.91 695.97,385.09 696.17,386.43 696.37,387.91 696.57,389.53 696.77,391.26 696.97,393.08 697.17,394.99 697.37,396.96 697.57,398.98 697.77,401.02 697.97,403.06 698.17,405.08 698.37,407.08 698.57,409.01 698.77,410.88 698.97,412.65 699.17,414.32 699.37,415.86 699.57,417.27 699.77,418.52 699.97,419.61 700.17,420.53 700.37,421.26 700.56,421.81 700.76,422.16 700.96,422.31 701.16,422.27 701.36,422.03 701.56,421.59 701.76,420.97 701.96,420.16 702.16,419.17 702.36,418.02 702.56,416.71 702.76,415.26 702.96,413.68 703.16,411.99 703.36,410.21 703.56,408.35 703.76,406.42 703.96,404.46 704.16,402.47 704.36,400.48 704.56,398.51 704.76,396.57 704.96,394.69 705.16,392.88 705.36,391.15 705.56,389.54 705.76,388.05 705.96,386.69 706.16,385.48 706.36,384.44 706.56,383.56 706.76,382.87 706.96,382.36 707.16,382.04 707.36,381.92 707.56,381.99 707.76,382.25 707.95,382.71 708.15,383.35 708.35,384.17 708.55,385.17 708.75,386.32 708.95,387.63 709.15,389.08 709.35,390.65 709.55,392.34 709.75,394.11 709.95,395.96 710.15,397.87 710.35,399.82 710.55,401.79 710.75,403.76 710.95,405.71 711.15,407.63 711.35,409.49 711.55,411.28 711.75,412.98 711.95,414.58 712.15,416.05 712.35,417.39 712.55,418.57 712.75,419.60 712.95,420.46 713.15,421.15 713.35,421.65 713.55,421.96 713.75,422.08 713.95,422.00 714.15,421.74 714.35,421.28 714.55,420.65 714.75,419.83 714.95,418.85 715.15,417.70 715.35,416.41 715.54,414.98 715.74,413.43 715.94,411.77 716.14,410.02 716.34,408.19 716.54,406.31 716.74,404.39 716.94,402.46 717.14,400.52 717.34,398.60 717.54,396.71 717.74,394.89 717.94,393.13 718.14,391.46 718.34,389.90 718.54,388.46 718.74,387.16 718.94,386.00 719.14,385.00 719.34,384.17 719.54,383.51 719.74,383.04 719.94,382.75 720.14,382.66 720.34,382.75 720.54,383.03 720.74,383.50 720.94,384.15 721.14,384.97 721.34,385.97 721.54,387.12 721.74,388.41 721.94,389.85 722.14,391.40 722.34,393.05 722.54,394.80 722.74,396.61 722.93,398.48 723.13,400.39 723.33,402.32 723.53,404.24 723.73,406.15 723.93,408.01 724.13,409.83 724.33,411.56 724.53,413.21 724.73,414.76 724.93,416.18 725.13,417.47 725.33,418.61 725.53,419.59 725.73,420.41 725.93,421.05 726.13,421.51 726.33,421.78 726.53,421.87 726.73,421.77 726.93,421.48 727.13,421.00 727.33,420.35 727.53,419.52 727.73,418.53 727.93,417.38 728.13,416.09 728.33,414.66 728.53,413.12 728.73,411.47 728.93,409.73 729.13,407.93 729.33,406.07 729.53,404.18 729.73,402.27 729.93,400.37 730.13,398.48 730.33,396.63 730.52,394.84 730.72,393.12 730.92,391.50 731.12,389.98 731.32,388.58 731.52,387.31 731.72,386.19 731.92,385.23 732.12,384.44 732.32,383.81 732.52,383.37 732.72,383.12 732.92,383.05 733.12,383.17 733.32,383.47 733.52,383.96 733.72,384.63 733.92,385.46 734.12,386.47 734.32,387.62 734.52,388.92 734.72,390.35 734.92,391.90 735.12,393.54 735.32,395.28 735.52,397.08 735.72,398.93 735.92,400.82 736.12,402.72 736.32,404.62 736.52,406.49 736.72,408.33 736.92,410.11 737.12,411.81 737.32,413.42 737.52,414.93 737.72,416.31 737.91,417.56 738.11,418.67 738.31,419.61 738.51,420.39 738.71,421.00 738.91,421.43 739.11,421.67 739.31,421.72 739.51,421.59 739.71,421.28 739.91,420.78 740.11,420.10 740.31,419.26 740.51,418.25 740.71,417.09 740.91,415.79 741.11,414.35 741.31,412.81 741.51,411.16 741.71,409.43 741.91,407.64 742.11,405.79 742.31,403.91 742.51,402.02 742.71,400.13 742.91,398.27 743.11,396.44 743.31,394.68 743.51,392.99 743.71,391.39 743.91,389.90 744.11,388.53 744.31,387.30 744.51,386.21 744.71,385.29 744.91,384.52 745.11,383.94 745.31,383.53 745.50,383.30 745.70,383.26 745.90,383.41 746.10,383.74 746.30,384.25 746.50,384.94 746.70,385.80 746.90,386.81 747.10,387.98 747.30,389.29 747.50,390.73 747.70,392.28 747.90,393.93 748.10,395.66 748.30,397.46 748.50,399.30 748.70,401.18 748.90,403.07 749.10,404.95 749.30,406.80 749.50,408.62 749.70,410.37 749.90,412.05 750.10,413.64 750.30,415.11 750.50,416.47 750.70,417.69 750.90,418.76 751.10,419.67 751.30,420.42 751.50,420.99 751.70,421.39 751.90,421.60 752.10,421.62 752.30,421.46 752.50,421.12 752.70,420.60 752.89,419.90 753.09,419.03 753.29,418.00 753.49,416.83 753.69,415.51 753.89,414.07 754.09,412.51 754.29,410.86 754.49,409.13 754.69,407.33 754.89,405.49 755.09,403.62 755.29,401.73 755.49,399.86 755.69,398.01 755.89,396.20 756.09,394.46 756.29,392.79 756.49,391.22 756.69,389.75 756.89,388.41 757.09,387.21 757.29,386.15 757.49,385.26 757.69,384.52 757.89,383.97 758.09,383.59 758.29,383.39 758.49,383.38 758.69,383.56 758.89,383.92 759.09,384.45 759.29,385.17 759.49,386.05 759.69,387.08 759.89,388.27 760.09,389.60 760.29,391.05 760.48,392.61 760.68,394.26 760.88,396.00 761.08,397.80 761.28,399.64 761.48,401.51 761.68,403.39 761.88,405.26 762.08,407.10 762.28,408.90 762.48,410.64 762.68,412.30 762.88,413.86 763.08,415.31 763.28,416.64 763.48,417.83 763.68,418.87 763.88,419.76 764.08,420.47 764.28,421.02 764.48,421.38 764.68,421.56 764.88,421.56 765.08,421.37 765.28,420.99 765.48,420.44 765.68,419.72 765.88,418.83 766.08,417.78 766.28,416.58 766.48,415.25 766.68,413.79 766.88,412.23 767.08,410.57 767.28,408.83 767.48,407.03 767.68,405.18 767.87,403.32 768.07,401.44 768.27,399.57 768.47,397.73 768.67,395.94 768.87,394.21 769.07,392.56 769.27,391.01 769.47,389.57 769.67,388.26 769.87,387.08 770.07,386.05 770.27,385.18 770.47,384.48 770.67,383.95 770.87,383.60 771.07,383.44 771.27,383.46 771.47,383.66 771.67,384.05 771.87,384.61 772.07,385.35 772.27,386.26 772.47,387.32 772.67,388.52 772.87,389.87 773.07,391.33 773.27,392.90 773.47,394.57 773.67,396.31 773.87,398.11 774.07,399.96 774.27,401.83 774.47,403.70 774.67,405.57 774.87,407.40 775.07,409.18 775.27,410.91 775.46,412.55 775.66,414.09 775.86,415.52 776.06,416.82 776.26,417.99 776.46,419.00 776.66,419.86 776.86,420.54 777.06,421.06 777.26,421.39 777.46,421.54 777.66,421.50 777.86,421.28 778.06,420.88 778.26,420.31 778.46,419.56 778.66,418.64 778.86,417.57 779.06,416.35 779.26,415.00 779.46,413.52 779.66,411.94 779.86,410.27 780.06,408.53 780.26,406.72 780.46,404.88 780.66,403.01 780.86,401.14 781.06,399.28 781.26,397.45 781.46,395.67 781.66,393.95 781.86,392.32 782.06,390.79 782.26,389.37 782.46,388.08 782.66,386.93 782.85,385.93 783.05,385.09 783.25,384.41 783.45,383.92 783.65,383.60 783.85,383.46 784.05,383.51 784.25,383.75 784.45,384.16 784.65,384.75 784.85,385.52 785.05,386.45 785.25,387.53 785.45,388.76 785.65,390.12 785.85,391.60 786.05,393.19 786.25,394.87 786.45,396.62 786.65,398.42 786.85,400.27 787.05,402.14 787.25,404.01 787.45,405.87 787.65,407.69 787.85,409.47 788.05,411.17 788.25,412.80 788.45,414.32 788.65,415.73 788.85,417.01 789.05,418.15 789.25,419.14 789.45,419.96 789.65,420.62 789.85,421.10 790.05,421.41 790.25,421.53 790.44,421.46 790.64,421.21 790.84,420.78 791.04,420.18 791.24,419.40 791.44,418.46 791.64,417.36 791.84,416.12 792.04,414.75 792.24,413.26 792.44,411.67 792.64,409.98 792.84,408.23 793.04,406.42 793.24,404.57 793.44,402.70 793.64,400.83 793.84,398.98 794.04,397.16 794.24,395.39 794.44,393.69 794.64,392.08 794.84,390.56 795.04,389.16 795.24,387.90 795.44,386.77 795.64,385.79 795.84,384.98 796.04,384.34 796.24,383.87 796.44,383.58 796.64,383.48 796.84,383.56 797.04,383.82 797.24,384.26 797.44,384.89 797.64,385.68 797.83,386.63 798.03,387.74 798.23,388.99 798.43,390.37 798.63,391.87 798.83,393.47 799.03,395.16 799.23,396.92 799.43,398.73 799.63,400.58 799.83,402.45 800.03,404.32 800.23,406.17 800.43,407.99 800.63,409.75 800.83,411.44 801.03,413.05 801.23,414.55 801.43,415.94 801.63,417.20 801.83,418.31 802.03,419.27 802.23,420.07 802.43,420.70 802.63,421.15 802.83,421.43 803.03,421.52 803.23,421.42 803.43,421.14 803.63,420.68 803.83,420.05 804.03,419.24 804.23,418.28 804.43,417.16 804.63,415.90 804.83,414.51 805.03,413.00 805.23,411.39 805.42,409.70 805.62,407.93 805.82,406.12 806.02,404.26 806.22,402.39 806.42,400.53 806.62,398.68 806.82,396.87 807.02,395.11 807.22,393.42 807.42,391.82 807.62,390.33 807.82,388.95 808.02,387.71 808.22,386.61 808.42,385.66 808.62,384.87 808.82,384.26 809.02,383.82 809.22,383.56 809.42,383.49 809.62,383.60 809.82,383.89 810.02,384.36 810.22,385.01 810.42,385.83 810.62,386.81 810.82,387.94 811.02,389.21 811.22,390.61 811.42,392.13 811.62,393.75 811.82,395.45 812.02,397.22 812.22,399.04 812.42,400.89 812.62,402.76 812.81,404.63 813.01,406.47 813.21,408.28 813.41,410.03 813.61,411.71 813.81,413.30 814.01,414.78 814.21,416.15 814.41,417.38 814.61,418.47 814.81,419.41 815.01,420.18 815.21,420.78 815.41,421.20 815.61,421.45 815.81,421.51 816.01,421.38 816.21,421.07 816.41,420.59 816.61,419.92 816.81,419.09 817.01,418.10 817.21,416.96 817.41,415.67 817.61,414.26 817.81,412.74 818.01,411.11 818.21,409.41 818.41,407.63 818.61,405.81 818.81,403.96 819.01,402.09 819.21,400.22 819.41,398.38 819.61,396.57 819.81,394.83 820.01,393.16 820.21,391.57 820.40,390.10 820.60,388.74 820.80,387.52 821.00,386.44 821.20,385.52 821.40,384.76 821.60,384.18 821.80,383.77 822.00,383.54 822.20,383.50 822.40,383.64 822.60,383.96 822.80,384.46 823.00,385.14 823.20,385.99 823.40,386.99 823.60,388.15 823.80,389.44 824.00,390.86" fill="none" stroke="#ffff00" stroke-width="2.4" stroke-linejoin="round"/>
<polyline points="524.40,400.98 524.60,401.52 524.80,402.07 525.00,402.62 525.20,403.17 525.40,403.71 525.60,404.25 525.80,404.76 526.00,405.25 526.20,405.71 526.40,406.15 526.60,406.54 526.80,406.89 527.00,407.20 527.20,407.47 527.40,407.68 527.60,407.84 527.80,407.94 528.00,407.99 528.19,407.99 528.39,407.93 528.59,407.82 528.79,407.65 528.99,407.43 529.19,407.16 529.39,406.85 529.59,406.49 529.79,406.09 529.99,405.65 530.19,405.18 530.39,404.69 530.59,404.17 530.79,403.64 530.99,403.09 531.19,402.54 531.39,401.99 531.59,401.44 531.79,400.91 531.99,400.39 532.19,399.89 532.39,399.42 532.59,398.98 532.79,398.57 532.99,398.21 533.19,397.88 533.39,397.61 533.59,397.38 533.79,397.20 533.99,397.08 534.19,397.01 534.39,397.00 534.59,397.05 534.79,397.14 534.99,397.30 535.19,397.50 535.39,397.75 535.59,398.06 535.78,398.40 535.98,398.79 536.18,399.22 536.38,399.68 536.58,400.16 536.78,400.68 536.98,401.21 537.18,401.75 537.38,402.30 537.58,402.85 537.78,403.40 537.98,403.94 538.18,404.46 538.38,404.97 538.58,405.45 538.78,405.90 538.98,406.31 539.18,406.69 539.38,407.03 539.58,407.32 539.78,407.56 539.98,407.75 540.18,407.89 540.38,407.97 540.58,408.00 540.78,407.97 540.98,407.89 541.18,407.75 541.38,407.57 541.58,407.33 541.78,407.04 541.98,406.70 542.18,406.32 542.38,405.91 542.58,405.46 542.78,404.98 542.98,404.48 543.17,403.95 543.37,403.41 543.57,402.86 543.77,402.31 543.97,401.76 544.17,401.22 544.37,400.69 544.57,400.18 544.77,399.69 544.97,399.23 545.17,398.80 545.37,398.41 545.57,398.07 545.77,397.76 545.97,397.51 546.17,397.30 546.37,397.15 546.57,397.05 546.77,397.00 546.97,397.01 547.17,397.08 547.37,397.20 547.57,397.37 547.77,397.60 547.97,397.87 548.17,398.20 548.37,398.56 548.57,398.97 548.77,399.41 548.97,399.88 549.17,400.37 549.37,400.89 549.57,401.43 549.77,401.98 549.97,402.53 550.17,403.08 550.37,403.62 550.57,404.16 550.76,404.67 550.96,405.17 551.16,405.64 551.36,406.07 551.56,406.48 551.76,406.84 551.96,407.15 552.16,407.42 552.36,407.64 552.56,407.81 552.76,407.93 552.96,407.99 553.16,408.00 553.36,407.95 553.56,407.84 553.76,407.68 553.96,407.47 554.16,407.21 554.36,406.90 554.56,406.55 554.76,406.16 554.96,405.73 555.16,405.26 555.36,404.77 555.56,404.26 555.76,403.73 555.96,403.19 556.16,402.63 556.36,402.08 556.56,401.54 556.76,401.00 556.96,400.48 557.16,399.97 557.36,399.50 557.56,399.05 557.76,398.64 557.96,398.26 558.15,397.93 558.35,397.65 558.55,397.41 558.75,397.23 558.95,397.10 559.15,397.02 559.35,397.00 559.55,397.03 559.75,397.12 559.95,397.27 560.15,397.46 560.35,397.71 560.55,398.00 560.75,398.34 560.95,398.72 561.15,399.14 561.35,399.60 561.55,400.08 561.75,400.59 561.95,401.11 562.15,401.65 562.35,402.20 562.55,402.76 562.75,403.31 562.95,403.85 563.15,404.37 563.35,404.88 563.55,405.37 563.75,405.82 563.95,406.25 564.15,406.63 564.35,406.97 564.55,407.27 564.75,407.52 564.95,407.72 565.15,407.87 565.35,407.96 565.55,408.00 565.74,407.98 565.94,407.91 566.14,407.78 566.34,407.60 566.54,407.37 566.74,407.09 566.94,406.76 567.14,406.39 567.34,405.98 567.54,405.54 567.74,405.06 567.94,404.56 568.14,404.04 568.34,403.50 568.54,402.96 568.74,402.41 568.94,401.86 569.14,401.31 569.34,400.78 569.54,400.26 569.74,399.77 569.94,399.31 570.14,398.87 570.34,398.48 570.54,398.12 570.74,397.81 570.94,397.55 571.14,397.33 571.34,397.17 571.54,397.06 571.74,397.01 571.94,397.01 572.14,397.06 572.34,397.18 572.54,397.34 572.74,397.56 572.94,397.82 573.13,398.14 573.33,398.50 573.53,398.89 573.73,399.33 573.93,399.79 574.13,400.29 574.33,400.80 574.53,401.34 574.73,401.88 574.93,402.43 575.13,402.98 575.33,403.53 575.53,404.07 575.73,404.59 575.93,405.09 576.13,405.56 576.33,406.00 576.53,406.41 576.73,406.78 576.93,407.10 577.13,407.38 577.33,407.61 577.53,407.79 577.73,407.91 577.93,407.98 578.13,408.00 578.33,407.96 578.53,407.86 578.73,407.71 578.93,407.51 579.13,407.26 579.33,406.96 579.53,406.61 579.73,406.23 579.93,405.80 580.13,405.34 580.33,404.86 580.53,404.35 580.72,403.82 580.92,403.28 581.12,402.73 581.32,402.18 581.52,401.63 581.72,401.09 581.92,400.56 582.12,400.06 582.32,399.57 582.52,399.12 582.72,398.70 582.92,398.32 583.12,397.99 583.32,397.69 583.52,397.45 583.72,397.26 583.92,397.12 584.12,397.03 584.32,397.00 584.52,397.02 584.72,397.10 584.92,397.24 585.12,397.42 585.32,397.66 585.52,397.95 585.72,398.28 585.92,398.66 586.12,399.07 586.32,399.52 586.52,400.00 586.72,400.50 586.92,401.02 587.12,401.56 587.32,402.11 587.52,402.66 587.72,403.21 587.92,403.76 588.11,404.29 588.31,404.80 588.51,405.29 588.71,405.75 588.91,406.18 589.11,406.57 589.31,406.92 589.51,407.22 589.71,407.48 589.91,407.69 590.11,407.85 590.31,407.95 590.51,408.00 590.71,407.99 590.91,407.92 591.11,407.81 591.31,407.64 591.51,407.41 591.71,407.14 591.91,406.82 592.11,406.46 592.31,406.05 592.51,405.62 592.71,405.15 592.91,404.65 593.11,404.13 593.31,403.60 593.51,403.05 593.71,402.50 593.91,401.95 594.11,401.40 594.31,400.87 594.51,400.35 594.71,399.85 594.91,399.38 595.11,398.94 595.31,398.54 595.51,398.18 595.70,397.86 595.90,397.59 596.10,397.36 596.30,397.19 596.50,397.07 596.70,397.01 596.90,397.00 597.10,397.05 597.30,397.15 597.50,397.31 597.70,397.52 597.90,397.78 598.10,398.08 598.30,398.43 598.50,398.82 598.70,399.25 598.90,399.71 599.10,400.20 599.30,400.72 599.50,388.44 599.70,386.02 599.90,383.52 600.10,380.97 600.30,378.40 600.50,375.82 600.70,373.28 600.90,370.78 601.10,368.36 601.30,366.04 601.50,363.85 601.70,361.79 601.90,359.89 602.10,358.17 602.30,356.65 602.50,355.33 602.70,354.23 602.90,353.36 603.09,352.73 603.29,352.34 603.49,352.20 603.69,352.31 603.89,352.66 604.09,353.25 604.29,354.08 604.49,355.14 604.69,356.42 604.89,357.90 605.09,359.58 605.29,361.45 605.49,363.47 605.69,365.64 605.89,367.94 606.09,370.35 606.29,372.84 606.49,375.40 606.69,378.01 606.89,380.64 607.09,383.27 607.29,385.87 607.49,388.44 607.69,390.94 607.89,393.36 608.09,395.68 608.29,397.88 608.49,399.95 608.69,401.86 608.89,403.60 609.09,405.17 609.29,406.54 609.49,407.72 609.69,408.69 609.89,409.46 610.09,410.00 610.29,410.33 610.49,410.45 610.68,410.35 610.88,410.04 611.08,409.53 611.28,408.82 611.48,407.93 611.68,406.86 611.88,405.62 612.08,404.24 612.28,402.72 612.48,401.08 612.68,399.34 612.88,397.52 613.08,395.62 613.28,393.68 613.48,391.71 613.68,389.72 613.88,387.75 614.08,385.80 614.28,383.89 614.48,382.05 614.68,380.28 614.88,378.61 615.08,377.05 615.28,375.61 615.48,374.31 615.68,373.15 615.88,372.15 616.08,371.32 616.28,370.67 616.48,370.19 616.68,369.89 616.88,369.77 617.08,369.84 617.28,370.10 617.48,370.53 617.68,371.14 617.88,371.92 618.07,372.86 618.27,373.96 618.47,375.20 618.67,376.57 618.87,378.06 619.07,379.66 619.27,381.35 619.47,383.11 619.67,384.94 619.87,386.82 620.07,388.73 620.27,390.64 620.47,392.56 620.67,394.46 620.87,396.32 621.07,398.13 621.27,399.87 621.47,401.54 621.67,403.11 621.87,404.58 622.07,405.93 622.27,407.15 622.47,408.24 622.67,409.18 622.87,409.97 623.07,410.60 623.27,411.07 623.47,411.38 623.67,411.53 623.87,411.51 624.07,411.34 624.27,411.00 624.47,410.51 624.67,409.88 624.87,409.10 625.07,408.19 625.27,407.17 625.47,406.03 625.66,404.79 625.86,403.46 626.06,402.06 626.26,400.59 626.46,399.08 626.66,397.54 626.86,395.98 627.06,394.41 627.26,392.85 627.46,391.32 627.66,389.83 627.86,388.39 628.06,387.01 628.26,385.71 628.46,384.49 628.66,383.38 628.86,382.37 629.06,381.48 629.26,380.72 629.46,380.09 629.66,379.59 629.86,379.23 630.06,379.01 630.26,378.94 630.46,379.01 630.66,379.23 630.86,379.58 631.06,380.07 631.26,380.69 631.46,381.44 631.66,382.31 631.86,383.29 632.06,384.37 632.26,385.54 632.46,386.79 632.66,388.11 632.86,389.49 633.05,390.92 633.25,392.38 633.45,393.85 633.65,395.34 633.85,396.82 634.05,398.29 634.25,399.72 634.45,401.11 634.65,402.45 634.85,403.72 635.05,404.91 635.25,406.02 635.45,407.03 635.65,407.95 635.85,408.75 636.05,409.43 636.25,410.00 636.45,410.43 636.65,410.74 636.85,410.92 637.05,410.98 637.25,410.90 637.45,410.69 637.65,410.36 637.85,409.90 638.05,409.34 638.25,408.66 638.45,407.88 638.65,407.00 638.85,406.03 639.05,404.99 639.25,403.88 639.45,402.72 639.65,401.50 639.85,400.26 640.05,398.99 640.25,397.70 640.45,396.42 640.64,395.15 640.84,393.90 641.04,392.69 641.24,391.52 641.44,390.40 641.64,389.35 641.84,388.38 642.04,387.48 642.24,386.68 642.44,385.97 642.64,385.37 642.84,384.88 643.04,384.49 643.24,384.22 643.44,384.07 643.64,384.04 643.84,384.12 644.04,384.32 644.24,384.64 644.44,385.07 644.64,385.60 644.84,386.23 645.04,386.97 645.24,387.79 645.44,388.69 645.64,389.66 645.84,390.70 646.04,391.80 646.24,392.94 646.44,394.12 646.64,395.32 646.84,396.53 647.04,397.75 647.24,398.97 647.44,400.16 647.64,401.33 647.84,402.46 648.03,403.54 648.23,404.56 648.43,405.52 648.63,406.41 648.83,407.21 649.03,407.93 649.23,408.56 649.43,409.09 649.63,409.51 649.83,409.83 650.03,410.04 650.23,410.15 650.43,410.14 650.63,410.03 650.83,409.81 651.03,409.49 651.23,409.06 651.43,408.54 651.63,407.93 651.83,407.23 652.03,406.46 652.23,405.61 652.43,404.70 652.63,403.74 652.83,402.73 653.03,401.69 653.23,400.61 653.43,399.53 653.63,398.43 653.83,397.33 654.03,396.25 654.23,395.19 654.43,394.17 654.63,393.18 654.83,392.24 655.03,391.36 655.23,390.54 655.43,389.80 655.62,389.14 655.82,388.56 656.02,388.07 656.22,387.67 656.42,387.37 656.62,387.17 656.82,387.06 657.02,387.06 657.22,387.17 657.42,387.37 657.62,387.66 657.82,388.06 658.02,388.54 658.22,389.11 658.42,389.76 658.62,390.49 658.82,391.29 659.02,392.14 659.22,393.05 659.42,394.01 659.62,395.00 659.82,396.02 660.02,397.06 660.22,398.11 660.42,399.16 660.62,400.21 660.82,401.23 661.02,402.23 661.22,403.19 661.42,404.11 661.62,404.98 661.82,405.79 662.02,406.53 662.22,407.20 662.42,407.80 662.62,408.31 662.82,408.73 663.01,409.07 663.21,409.31 663.41,409.46 663.61,409.51 663.81,409.47 664.01,409.33 664.21,409.10 664.41,408.78 664.61,408.37 664.81,407.88 665.01,407.31 665.21,406.67 665.41,405.96 665.61,405.19 665.81,404.37 666.01,403.50 666.21,402.59 666.41,401.65 666.61,400.70 666.81,399.73 667.01,398.75 667.21,397.78 667.41,396.83 667.61,395.89 667.81,394.99 668.01,394.12 668.21,393.30 668.41,392.54 668.61,391.83 668.81,391.19 669.01,390.62 669.21,390.13 669.41,389.72 669.61,389.39 669.81,389.16 670.01,389.00 670.21,388.94 670.41,388.97 670.60,389.09 670.80,389.30 671.00,389.60 671.20,389.97 671.40,390.43 671.60,390.97 671.80,391.58 672.00,392.25 672.20,392.98 672.40,393.77 672.60,394.60 672.80,395.47 673.00,396.37 673.20,397.29 673.40,398.23 673.60,399.18 673.80,400.12 674.00,401.05 674.20,401.97 674.40,402.86 674.60,402.97 674.80,403.12 675.00,403.32 675.20,403.60 675.40,403.95 675.60,404.38 675.80,404.91 676.00,405.52 676.20,406.22 676.40,407.00 676.60,407.85 676.80,408.77 677.00,409.73 677.20,410.74 677.40,411.77 677.60,412.81 677.80,413.84 677.99,414.84 678.19,415.80 678.39,416.71 678.59,417.54 678.79,418.28 678.99,418.92 679.19,419.44 679.39,419.83 679.59,420.08 679.79,420.18 679.99,420.13 680.19,419.93 680.39,419.56 680.59,419.02 680.79,418.33 680.99,417.48 681.19,416.48 681.39,415.33 681.59,414.05 681.79,412.64 681.99,411.12 682.19,409.51 682.39,407.81 682.59,406.05 682.79,404.24 682.99,402.40 683.19,400.55 683.39,398.71 683.59,396.90 683.79,395.13 683.99,393.43 684.19,391.81 684.39,390.30 684.59,388.89 684.79,387.62 684.99,386.50 685.19,385.53 685.39,384.74 685.58,384.12 685.78,383.69 685.98,383.45 686.18,383.40 686.38,383.55 686.58,383.89 686.78,384.43 686.98,385.15 687.18,386.06 687.38,387.14 687.58,388.38 687.78,389.78 687.98,391.31 688.18,392.97 688.38,394.74 688.58,396.59 688.78,398.52 688.98,400.51 689.18,402.52 689.38,404.56 689.58,406.58 689.78,408.59 689.98,410.54 690.18,412.44 690.38,414.25 690.58,415.96 690.78,417.56 690.98,419.02 691.18,420.33 691.38,421.49 691.58,422.47 691.78,423.27 691.98,423.89 692.18,424.31 692.38,424.53 692.58,424.54 692.78,424.36 692.97,423.98 693.17,423.40 693.37,422.63 693.57,421.67 693.77,420.54 693.97,419.25 694.17,417.81 694.37,416.23 694.57,414.53 694.77,412.73 694.97,410.84 695.17,408.87 695.37,406.86 695.57,404.82 695.77,402.76 695.97,400.72 696.17,398.70 696.37,396.73 696.57,394.83 696.77,393.01 696.97,391.29 697.17,389.69 697.37,388.23 697.57,386.91 697.77,385.75 697.97,384.77 698.17,383.96 698.37,383.34 698.57,382.92 698.77,382.69 698.97,382.66 699.17,382.84 699.37,383.20 699.57,383.77 699.77,384.52 699.97,385.45 700.17,386.55 700.37,387.81 700.56,389.21 700.76,390.75 700.96,392.41 701.16,394.18 701.36,396.02 701.56,397.94 701.76,399.90 701.96,401.89 702.16,403.89 702.36,405.88 702.56,407.85 702.76,409.76 702.96,411.61 703.16,413.37 703.36,415.04 703.56,416.58 703.76,418.00 703.96,419.26 704.16,420.37 704.36,421.31 704.56,422.08 704.76,422.66 704.96,423.04 705.16,423.24 705.36,423.24 705.56,423.04 705.76,422.65 705.96,422.07 706.16,421.30 706.36,420.36 706.56,419.26 706.76,417.99 706.96,416.58 707.16,415.04 707.36,413.39 707.56,411.64 707.76,409.80 707.95,407.90 708.15,405.96 708.35,403.98 708.55,402.00 708.75,400.03 708.95,398.09 709.15,396.19 709.35,394.37 709.55,392.62 709.75,390.98 709.95,389.46 710.15,388.06 710.35,386.81 710.55,385.72 710.75,384.79 710.95,384.04 711.15,383.47 711.35,383.09 711.55,382.90 711.75,382.91 711.95,383.10 712.15,383.49 712.35,384.07 712.55,384.82 712.75,385.75 712.95,386.84 713.15,388.09 713.35,389.48 713.55,390.99 713.75,392.62 713.95,394.35 714.15,396.15 714.35,398.02 714.55,399.94 714.75,401.88 714.95,403.82 715.15,405.76 715.35,407.66 715.54,409.52 715.74,411.31 715.94,413.02 716.14,414.62 716.34,416.11 716.54,417.47 716.74,418.69 716.94,419.75 717.14,420.64 717.34,421.36 717.54,421.90 717.74,422.26 717.94,422.42 718.14,422.40 718.34,422.18 718.54,421.78 718.74,421.19 718.94,420.43 719.14,419.49 719.34,418.39 719.54,417.14 719.74,415.75 719.94,414.24 720.14,412.61 720.34,410.89 720.54,409.09 720.74,407.23 720.94,405.33 721.14,403.40 721.34,401.47 721.54,399.55 721.74,397.66 721.94,395.82 722.14,394.05 722.34,392.36 722.54,390.78 722.74,389.31 722.93,387.96 723.13,386.77 723.33,385.72 723.53,384.84 723.73,384.14 723.93,383.61 724.13,383.27 724.33,383.11 724.53,383.14 724.73,383.37 724.93,383.78 725.13,384.37 725.33,385.14 725.53,386.07 725.73,387.17 725.93,388.42 726.13,389.80 726.33,391.30 726.53,392.92 726.73,394.63 726.93,396.41 727.13,398.26 727.33,400.14 727.53,402.05 727.73,403.97 727.93,405.87 728.13,407.73 728.33,409.55 728.53,411.30 728.73,412.96 728.93,414.53 729.13,415.97 729.33,417.29 729.53,418.47 729.73,419.49 729.93,420.35 730.13,421.03 730.33,421.54 730.52,421.86 730.72,422.00 730.92,421.95 731.12,421.71 731.32,421.28 731.52,420.68 731.72,419.90 731.92,418.95 732.12,417.85 732.32,416.60 732.52,415.21 732.72,413.70 732.92,412.09 733.12,410.38 733.32,408.60 733.52,406.76 733.72,404.88 733.92,402.98 734.12,401.07 734.32,399.19 734.52,397.33 734.72,395.52 734.92,393.79 735.12,392.14 735.32,390.59 735.52,389.16 735.72,387.86 735.92,386.70 736.12,385.69 736.32,384.85 736.52,384.18 736.72,383.69 736.92,383.38 737.12,383.26 737.32,383.32 737.52,383.57 737.72,384.00 737.91,384.62 738.11,385.40 738.31,386.35 738.51,387.46 738.71,388.72 738.91,390.11 739.11,391.61 739.31,393.23 739.51,394.93 739.71,396.71 739.91,398.54 740.11,400.41 740.31,402.30 740.51,404.20 740.71,406.08 740.91,407.92 741.11,409.71 741.31,411.43 741.51,413.06 741.71,414.59 741.91,416.01 742.11,417.29 742.31,418.43 742.51,419.42 742.71,420.25 742.91,420.90 743.11,421.37 743.31,421.66 743.51,421.77 743.71,421.69 743.91,421.43 744.11,420.98 744.31,420.35 744.51,419.56 744.71,418.59 744.91,417.48 745.11,416.21 745.31,414.82 745.50,413.31 745.70,411.69 745.90,409.98 746.10,408.21 746.30,406.38 746.50,404.51 746.70,402.62 746.90,400.73 747.10,398.86 747.30,397.03 747.50,395.25 747.70,393.54 747.90,391.92 748.10,390.40 748.30,389.00 748.50,387.73 748.70,386.60 748.90,385.63 749.10,384.82 749.30,384.18 749.50,383.72 749.70,383.44 749.90,383.35 750.10,383.44 750.30,383.72 750.50,384.18 750.70,384.82 750.90,385.63 751.10,386.60 751.30,387.73 751.50,388.99 751.70,390.39 751.90,391.91 752.10,393.53 752.30,395.24 752.50,397.01 752.70,398.84 752.89,400.71 753.09,402.59 753.29,404.47 753.49,406.33 753.69,408.16 753.89,409.93 754.09,411.63 754.29,413.24 754.49,414.74 754.69,416.13 754.89,417.38 755.09,418.50 755.29,419.45 755.49,420.25 755.69,420.87 755.89,421.31 756.09,421.57 756.29,421.65 756.49,421.54 756.69,421.25 756.89,420.77 757.09,420.12 757.29,419.30 757.49,418.32 757.69,417.18 757.89,415.91 758.09,414.50 758.29,412.98 758.49,411.35 758.69,409.64 758.89,407.86 759.09,406.03 759.29,404.17 759.49,402.29 759.69,400.41 759.89,398.56 760.09,396.74 760.29,394.98 760.48,393.29 760.68,391.69 760.88,390.19 761.08,388.82 761.28,387.58 761.48,386.48 761.68,385.54 761.88,384.76 762.08,384.15 762.28,383.72 762.48,383.48 762.68,383.41 762.88,383.54 763.08,383.84 763.28,384.33 763.48,384.99 763.68,385.83 763.88,386.82 764.08,387.97 764.28,389.25 764.48,390.67 764.68,392.19 764.88,393.82 765.08,395.54 765.28,397.32 765.48,399.15 765.68,401.01 765.88,402.89 766.08,404.76 766.28,406.61 766.48,408.42 766.68,410.18 766.88,411.86 767.08,413.44 767.28,414.93 767.48,416.29 767.68,417.52 767.87,418.60 768.07,419.53 768.27,420.29 768.47,420.89 768.67,421.30 768.87,421.53 769.07,421.58 769.27,421.44 769.47,421.12 769.67,420.62 769.87,419.94 770.07,419.10 770.27,418.09 770.47,416.93 770.67,415.64 770.87,414.21 771.07,412.68 771.27,411.04 771.47,409.33 771.67,407.54 771.87,405.71 772.07,403.85 772.27,401.97 772.47,400.10 772.67,398.26 772.87,396.45 773.07,394.71 773.27,393.03 773.47,391.45 773.67,389.98 773.87,388.63 774.07,387.41 774.27,386.34 774.47,385.43 774.67,384.68 774.87,384.10 775.07,383.71 775.27,383.49 775.46,383.46 775.66,383.61 775.86,383.95 776.06,384.46 776.26,385.15 776.46,386.01 776.66,387.03 776.86,388.19 777.06,389.50 777.26,390.93 777.46,392.47 777.66,394.11 777.86,395.83 778.06,397.62 778.26,399.45 778.46,401.32 778.66,403.19 778.86,405.06 779.06,406.90 779.26,408.70 779.46,410.44 779.66,412.10 779.86,413.67 780.06,415.13 780.26,416.47 780.46,417.68 780.66,418.73 780.86,419.63 781.06,420.37 781.26,420.93 781.46,421.31 781.66,421.51 781.86,421.53 782.06,421.36 782.26,421.01 782.46,420.48 782.66,419.78 782.85,418.91 783.05,417.88 783.25,416.70 783.45,415.39 783.65,413.95 783.85,412.40 784.05,410.75 784.25,409.02 784.45,407.23 784.65,405.40 784.85,403.54 785.05,401.66 785.25,399.80 785.45,397.96 785.65,396.17 785.85,394.43 786.05,392.78 786.25,391.22 786.45,389.76 786.65,388.44 786.85,387.24 787.05,386.20 787.25,385.31 787.45,384.59 787.65,384.05 787.85,383.68 788.05,383.49 788.25,383.49 788.45,383.67 788.65,384.04 788.85,384.58 789.05,385.30 789.25,386.18 789.45,387.22 789.65,388.41 789.85,389.74 790.05,391.19 790.25,392.75 790.44,394.40 790.64,396.13 790.84,397.92 791.04,399.76 791.24,401.62 791.44,403.49 791.64,405.36 791.84,407.19 792.04,408.98 792.24,410.71 792.44,412.35 792.64,413.91 792.84,415.35 793.04,416.66 793.24,417.84 793.44,418.88 793.64,419.75 793.84,420.45 794.04,420.99 794.24,421.34 794.44,421.51 794.64,421.50 794.84,421.30 795.04,420.92 795.24,420.36 795.44,419.63 795.64,418.73 795.84,417.68 796.04,416.48 796.24,415.15 796.44,413.69 796.64,412.12 796.84,410.46 797.04,408.73 797.24,406.93 797.44,405.09 797.64,403.23 797.83,401.35 798.03,399.49 798.23,397.66 798.43,395.88 798.63,394.16 798.83,392.52 799.03,390.98 799.23,389.55 799.43,388.24 799.63,387.07 799.83,386.05 800.03,385.20 800.23,384.50 800.43,383.99 800.63,383.65 800.83,383.49 801.03,383.52 801.23,383.73 801.43,384.13 801.63,384.70 801.83,385.44 802.03,386.35 802.23,387.42 802.43,388.63 802.63,389.98 802.83,391.44 803.03,393.02 803.23,394.68 803.43,396.42 803.63,398.22 803.83,400.07 804.03,401.93 804.23,403.80 804.43,405.66 804.63,407.49 804.83,409.27 805.03,410.98 805.23,412.61 805.42,414.14 805.62,415.57 805.82,416.86 806.02,418.01 806.22,419.02 806.42,419.87 806.62,420.54 806.82,421.04 807.02,421.37 807.22,421.51 807.42,421.46 807.62,421.24 807.82,420.83 808.02,420.24 808.22,419.48 808.42,418.56 808.62,417.48 808.82,416.26 809.02,414.91 809.22,413.43 809.42,411.85 809.62,410.18 809.82,408.43 810.02,406.63 810.22,404.78 810.42,402.92 810.62,401.05 810.82,399.19 811.02,397.37 811.22,395.59 811.42,393.89 811.62,392.26 811.82,390.74 812.02,389.33 812.22,388.04 812.42,386.90 812.62,385.91 812.81,385.08 813.01,384.41 813.21,383.93 813.41,383.62 813.61,383.49 813.81,383.55 814.01,383.79 814.21,384.22 814.41,384.82 814.61,385.59 814.81,386.52 815.01,387.61 815.21,388.85 815.41,390.21 815.61,391.70 815.81,393.29 816.01,394.97 816.21,396.72 816.41,398.53 816.61,400.37 816.81,402.24 817.01,404.11 817.21,405.96 817.41,407.78 817.61,409.55 817.81,411.25 818.01,412.87 818.21,414.38 818.41,415.78 818.61,417.05 818.81,418.19 819.01,419.16 819.21,419.98 819.41,420.63 819.61,421.10 819.81,421.40 820.01,421.51 820.21,421.43 820.40,421.18 820.60,420.74 820.80,420.12 821.00,419.34 821.20,418.39 821.40,417.29 821.60,416.04 821.80,414.67 822.00,413.17 822.20,411.58 822.40,409.89 822.60,408.13 822.80,406.32 823.00,404.47 823.20,402.61 823.40,400.74 823.60,398.89 823.80,397.07 824.00,395.31" fill="none" stroke="#ff00ff" stroke-width="2.4" stroke-linejoin="round"/>
<polyline points="524.40,398.68 524.60,398.30 524.80,397.97 525.00,397.68 525.20,397.44 525.40,397.25 525.60,397.11 525.80,397.03 526.00,397.00 526.20,397.03 526.40,397.11 526.60,397.25 526.80,397.44 527.00,397.68 527.20,397.97 527.40,398.30 527.60,398.68 527.80,399.10 528.00,399.55 528.19,400.03 528.39,400.53 528.59,401.06 528.79,401.60 528.99,402.14 529.19,402.70 529.39,403.25 529.59,403.79 529.79,404.32 529.99,404.83 530.19,405.32 530.39,405.78 530.59,406.20 530.79,406.59 530.99,406.94 531.19,407.24 531.39,407.50 531.59,407.70 531.79,407.86 531.99,407.95 532.19,408.00 532.39,407.99 532.59,407.92 532.79,407.80 532.99,407.62 533.19,407.40 533.39,407.12 533.59,406.80 533.79,406.43 533.99,406.03 534.19,405.59 534.39,405.12 534.59,404.62 534.79,404.10 534.99,403.56 535.19,403.02 535.39,402.47 535.59,401.91 535.78,401.37 535.98,400.84 536.18,400.32 536.38,399.82 536.58,399.35 536.78,398.92 536.98,398.52 537.18,398.16 537.38,397.84 537.58,397.57 537.78,397.35 537.98,397.18 538.18,397.07 538.38,397.01 538.58,397.00 538.78,397.06 538.98,397.16 539.18,397.32 539.38,397.53 539.58,397.79 539.78,398.10 539.98,398.46 540.18,398.85 540.38,399.28 540.58,399.74 540.78,400.23 540.98,400.75 541.18,401.28 541.38,401.82 541.58,402.37 541.78,402.93 541.98,403.47 542.18,404.01 542.38,404.53 542.58,405.03 542.78,405.51 542.98,405.96 543.17,406.37 543.37,406.74 543.57,407.07 543.77,407.35 543.97,407.59 544.17,407.77 544.37,407.90 544.57,407.98 544.77,408.00 544.97,407.96 545.17,407.88 545.37,407.73 545.57,407.54 545.77,407.29 545.97,406.99 546.17,406.65 546.37,406.27 546.57,405.85 546.77,405.40 546.97,404.91 547.17,404.40 547.37,403.88 547.57,403.34 547.77,402.79 547.97,402.24 548.17,401.69 548.37,401.15 548.57,400.62 548.77,400.11 548.97,399.63 549.17,399.17 549.37,398.75 549.57,398.36 549.77,398.02 549.97,397.72 550.17,397.47 550.37,397.28 550.57,397.13 550.76,397.04 550.96,397.00 551.16,397.02 551.36,397.09 551.56,397.22 551.76,397.40 551.96,397.63 552.16,397.92 552.36,398.24 552.56,398.61 552.76,399.02 552.96,399.47 553.16,399.94 553.36,400.45 553.56,400.97 553.76,401.50 553.96,402.05 554.16,402.60 554.36,403.15 554.56,403.70 554.76,404.23 554.96,404.74 555.16,405.24 555.36,405.70 555.56,406.13 555.76,406.53 555.96,406.88 556.16,407.19 556.36,407.46 556.56,407.67 556.76,407.83 556.96,407.94 557.16,407.99 557.36,407.99 557.56,407.93 557.76,407.82 557.96,407.66 558.15,407.44 558.35,407.17 558.55,406.86 558.75,406.50 558.95,406.10 559.15,405.66 559.35,405.20 559.55,404.70 559.75,404.19 559.95,403.65 560.15,403.11 560.35,402.56 560.55,402.01 560.75,401.46 560.95,400.92 561.15,400.40 561.35,399.91 561.55,399.43 561.75,398.99 561.95,398.58 562.15,398.22 562.35,397.89 562.55,397.61 562.75,397.39 562.95,397.21 563.15,397.08 563.35,397.02 563.55,397.00 563.75,397.04 563.95,397.14 564.15,397.29 564.35,397.49 564.55,397.75 564.75,398.05 564.95,398.39 565.15,398.78 565.35,399.20 565.55,399.66 565.74,400.15 565.94,400.66 566.14,401.19 566.34,401.73 566.54,402.28 566.74,402.83 566.94,403.38 567.14,403.92 567.34,404.45 567.54,404.95 567.74,405.43 567.94,405.88 568.14,406.30 568.34,406.68 568.54,407.02 568.74,407.31 568.94,407.55 569.14,407.75 569.34,407.88 569.54,407.97 569.74,408.00 569.94,407.97 570.14,407.89 570.34,407.76 570.54,407.57 570.74,407.33 570.94,407.05 571.14,406.71 571.34,406.34 571.54,405.92 571.74,405.47 571.94,405.00 572.14,404.49 572.34,403.97 572.54,403.43 572.74,402.88 572.94,402.33 573.13,401.78 573.33,401.24 573.53,400.71 573.73,400.19 573.93,399.71 574.13,399.24 574.33,398.82 574.53,398.43 574.73,398.08 574.93,397.77 575.13,397.51 575.33,397.31 575.53,397.15 575.73,397.05 575.93,397.00 576.13,397.01 576.33,397.08 576.53,397.20 576.73,397.37 576.93,397.59 577.13,397.87 577.33,398.19 577.53,398.55 577.73,398.95 577.93,399.39 578.13,399.86 578.33,400.36 578.53,400.88 578.73,401.41 578.93,401.96 579.13,402.51 579.33,403.06 579.53,403.61 579.73,404.14 579.93,404.66 580.13,405.15 580.33,405.62 580.53,406.06 580.72,406.46 580.92,406.83 581.12,407.14 581.32,407.42 581.52,407.64 581.72,407.81 581.92,407.93 582.12,407.99 582.32,408.00 582.52,407.95 582.72,407.84 582.92,407.69 583.12,407.48 583.32,407.22 583.52,406.91 583.72,406.56 583.92,406.17 584.12,405.74 584.32,405.28 584.52,404.79 584.72,404.28 584.92,403.75 585.12,403.20 585.32,402.65 585.52,402.10 585.72,401.55 585.92,401.01 586.12,400.49 586.32,399.99 586.52,399.51 586.72,399.06 586.92,398.65 587.12,398.28 587.32,397.94 587.52,397.66 587.72,397.42 587.92,397.23 588.11,397.10 588.31,397.02 588.51,397.00 588.71,397.03 588.91,397.12 589.11,397.26 589.31,397.45 589.51,397.70 589.71,397.99 589.91,398.33 590.11,398.71 590.31,399.13 590.51,399.58 590.71,400.07 590.91,400.57 591.11,401.10 591.31,401.64 591.51,402.19 591.71,402.74 591.91,403.29 592.11,403.83 592.31,404.36 592.51,404.87 592.71,405.35 592.91,405.81 593.11,406.23 593.31,406.62 593.51,406.96 593.71,407.26 593.91,407.52 594.11,407.72 594.31,407.86 594.51,407.96 594.71,408.00 594.91,407.98 595.11,407.91 595.31,407.79 595.51,407.61 595.70,407.38 595.90,407.10 596.10,406.77 596.30,406.40 596.50,406.00 596.70,405.55 596.90,405.08 597.10,404.58 597.30,404.06 597.50,403.52 597.70,402.97 597.90,402.42 598.10,401.87 598.30,401.33 598.50,400.79 598.70,400.28 598.90,399.79 599.10,399.32 599.30,398.89 599.50,419.57 599.70,421.83 599.90,423.90 600.10,425.75 600.30,427.38 600.50,428.77 600.70,429.92 600.90,430.81 601.10,431.45 601.30,431.82 601.50,431.92 601.70,431.76 601.90,431.35 602.10,430.68 602.30,429.77 602.50,428.63 602.70,427.27 602.90,425.70 603.09,423.93 603.29,422.00 603.49,419.91 603.69,417.69 603.89,415.35 604.09,412.92 604.29,410.42 604.49,407.87 604.69,405.30 604.89,402.73 605.09,400.18 605.29,397.68 605.49,395.24 605.69,392.89 605.89,390.65 606.09,388.53 606.29,386.55 606.49,384.74 606.69,383.10 606.89,381.64 607.09,380.39 607.29,379.34 607.49,378.51 607.69,377.90 607.89,377.51 608.09,377.34 608.29,377.41 608.49,377.69 608.69,378.19 608.89,378.90 609.09,379.82 609.29,380.93 609.49,382.22 609.69,383.67 609.89,385.29 610.09,387.04 610.29,388.91 610.49,390.88 610.68,392.95 610.88,395.08 611.08,397.25 611.28,399.45 611.48,401.66 611.68,403.86 611.88,406.03 612.08,408.15 612.28,410.20 612.48,412.16 612.68,414.02 612.88,415.76 613.08,417.37 613.28,418.84 613.48,420.15 613.68,421.28 613.88,422.25 614.08,423.03 614.28,423.62 614.48,424.02 614.68,424.22 614.88,424.23 615.08,424.05 615.28,423.67 615.48,423.12 615.68,422.38 615.88,421.47 616.08,420.41 616.28,419.19 616.48,417.84 616.68,416.36 616.88,414.77 617.08,413.08 617.28,411.31 617.48,409.48 617.68,407.61 617.88,405.70 618.07,403.78 618.27,401.86 618.47,399.97 618.67,398.11 618.87,396.31 619.07,394.57 619.27,392.92 619.47,391.37 619.67,389.93 619.87,388.61 620.07,387.42 620.27,386.38 620.47,385.49 620.67,384.76 620.87,384.19 621.07,383.79 621.27,383.55 621.47,383.49 621.67,383.59 621.87,383.86 622.07,384.30 622.27,384.89 622.47,385.64 622.67,386.53 622.87,387.55 623.07,388.70 623.27,389.96 623.47,391.33 623.67,392.78 623.87,394.31 624.07,395.90 624.27,397.53 624.47,399.20 624.67,400.89 624.87,402.58 625.07,404.25 625.27,405.90 625.47,407.50 625.66,409.05 625.86,410.53 626.06,411.93 626.26,413.23 626.46,414.43 626.66,415.52 626.86,416.48 627.06,417.31 627.26,418.00 627.46,418.55 627.66,418.96 627.86,419.21 628.06,419.32 628.26,419.28 628.46,419.08 628.66,418.75 628.86,418.27 629.06,417.65 629.26,416.90 629.46,416.03 629.66,415.05 629.86,413.96 630.06,412.78 630.26,411.51 630.46,410.18 630.66,408.78 630.86,407.34 631.06,405.86 631.26,404.37 631.46,402.86 631.66,401.37 631.86,399.89 632.06,398.45 632.26,397.05 632.46,395.71 632.66,394.44 632.86,393.25 633.05,392.15 633.25,391.14 633.45,390.25 633.65,389.47 633.85,388.80 634.05,388.27 634.25,387.86 634.45,387.59 634.65,387.45 634.85,387.45 635.05,387.57 635.25,387.83 635.45,388.22 635.65,388.74 635.85,389.37 636.05,390.11 636.25,390.96 636.45,391.91 636.65,392.95 636.85,394.06 637.05,395.24 637.25,396.48 637.45,397.77 637.65,399.09 637.85,400.43 638.05,401.78 638.25,403.13 638.45,404.47 638.65,405.78 638.85,407.06 639.05,408.29 639.25,409.46 639.45,410.56 639.65,411.58 639.85,412.52 640.05,413.36 640.25,414.10 640.45,414.74 640.64,415.26 640.84,415.66 641.04,415.95 641.24,416.12 641.44,416.16 641.64,416.08 641.84,415.89 642.04,415.57 642.24,415.14 642.44,414.60 642.64,413.96 642.84,413.22 643.04,412.39 643.24,411.47 643.44,410.48 643.64,409.42 643.84,408.31 644.04,407.15 644.24,405.96 644.44,404.74 644.64,403.51 644.84,402.28 645.04,401.05 645.24,399.85 645.44,398.67 645.64,397.53 645.84,396.45 646.04,395.42 646.24,394.46 646.44,393.57 646.64,392.77 646.84,392.06 647.04,391.45 647.24,390.94 647.44,390.53 647.64,390.23 647.84,390.04 648.03,389.97 648.23,390.00 648.43,390.14 648.63,390.40 648.83,390.76 649.03,391.22 649.23,391.78 649.43,392.44 649.63,393.17 649.83,393.99 650.03,394.88 650.23,395.84 650.43,396.85 650.63,397.90 650.83,398.99 651.03,400.11 651.23,401.24 651.43,402.38 651.63,403.51 651.83,404.63 652.03,405.73 652.23,406.79 652.43,407.81 652.63,408.78 652.83,409.69 653.03,410.53 653.23,411.30 653.43,411.98 653.63,412.58 653.83,413.09 654.03,413.50 654.23,413.81 654.43,414.01 654.63,414.12 654.83,414.12 655.03,414.02 655.23,413.82 655.43,413.52 655.62,413.12 655.82,412.62 656.02,412.04 656.22,411.38 656.42,410.64 656.62,409.84 656.82,408.97 657.02,408.04 657.22,407.07 657.42,406.07 657.62,405.03 657.82,403.98 658.02,402.92 658.22,401.86 658.42,400.81 658.62,399.78 658.82,398.77 659.02,397.80 659.22,396.88 659.42,396.01 659.62,395.21 659.82,394.47 660.02,393.80 660.22,393.21 660.42,392.71 660.62,392.30 660.82,391.98 661.02,391.75 661.22,391.62 661.42,391.59 661.62,391.65 661.82,391.81 662.02,392.07 662.22,392.41 662.42,392.85 662.62,393.37 662.82,393.97 663.01,394.64 663.21,395.38 663.41,396.18 663.61,397.03 663.81,397.93 664.01,398.87 664.21,399.83 664.41,400.82 664.61,401.82 664.81,402.82 665.01,403.81 665.21,404.79 665.41,405.75 665.61,406.67 665.81,407.56 666.01,408.39 666.21,409.18 666.41,409.90 666.61,410.55 666.81,411.13 667.01,411.63 667.21,412.04 667.41,412.38 667.61,412.62 667.81,412.77 668.01,412.83 668.21,412.80 668.41,412.68 668.61,412.46 668.81,412.16 669.01,411.78 669.21,411.31 669.41,410.77 669.61,410.15 669.81,409.47 670.01,408.73 670.21,407.93 670.41,407.09 670.60,406.21 670.80,405.30 671.00,404.37 671.20,403.43 671.40,402.47 671.60,401.52 671.80,400.59 672.00,399.67 672.20,398.78 672.40,397.92 672.60,397.11 672.80,396.35 673.00,395.64 673.20,395.00 673.40,394.43 673.60,393.92 673.80,393.50 674.00,393.16 674.20,392.90 674.40,392.73 674.60,393.00 674.80,393.14 675.00,393.17 675.20,393.09 675.40,392.92 675.60,392.67 675.80,392.35 676.00,391.99 676.20,391.60 676.40,391.21 676.60,390.82 676.80,390.46 677.00,390.14 677.20,389.89 677.40,389.71 677.60,389.63 677.80,389.65 677.99,389.78 678.19,390.03 678.39,390.41 678.59,390.93 678.79,391.58 678.99,392.36 679.19,393.27 679.39,394.31 679.59,395.47 679.79,396.73 679.99,398.10 680.19,399.56 680.39,401.09 680.59,402.69 680.79,404.32 680.99,405.98 681.19,407.66 681.39,409.32 681.59,410.95 681.79,412.54 681.99,414.07 682.19,415.51 682.39,416.86 682.59,418.09 682.79,419.20 682.99,420.16 683.19,420.97 683.39,421.61 683.59,422.09 683.79,422.38 683.99,422.48 684.19,422.40 684.39,422.13 684.59,421.67 684.79,421.02 684.99,420.20 685.19,419.20 685.39,418.03 685.58,416.71 685.78,415.25 685.98,413.65 686.18,411.95 686.38,410.14 686.58,408.26 686.78,406.31 686.98,404.32 687.18,402.30 687.38,400.29 687.58,398.28 687.78,396.31 687.98,394.40 688.18,392.56 688.38,390.81 688.58,389.17 688.78,387.66 688.98,386.29 689.18,385.07 689.38,384.01 689.58,383.14 689.78,382.45 689.98,381.95 690.18,381.65 690.38,381.54 690.58,381.64 690.78,381.95 690.98,382.44 691.18,383.14 691.38,384.01 691.58,385.07 691.78,386.30 691.98,387.68 692.18,389.20 692.38,390.85 692.58,392.61 692.78,394.47 692.97,396.40 693.17,398.39 693.37,400.42 693.57,402.47 693.77,404.52 693.97,406.55 694.17,408.53 694.37,410.46 694.57,412.31 694.77,414.06 694.97,415.70 695.17,417.21 695.37,418.58 695.57,419.79 695.77,420.83 695.97,421.70 696.17,422.38 696.37,422.86 696.57,423.15 696.77,423.24 696.97,423.13 697.17,422.82 697.37,422.31 697.57,421.61 697.77,420.73 697.97,419.68 698.17,418.46 698.37,417.08 698.57,415.57 698.77,413.93 698.97,412.18 699.17,410.35 699.37,408.43 699.57,406.47 699.77,404.46 699.97,402.44 700.17,400.43 700.37,398.43 700.56,396.48 700.76,394.59 700.96,392.77 701.16,391.05 701.36,389.45 701.56,387.97 701.76,386.63 701.96,385.45 702.16,384.44 702.36,383.60 702.56,382.94 702.76,382.48 702.96,382.21 703.16,382.13 703.36,382.25 703.56,382.57 703.76,383.08 703.96,383.78 704.16,384.66 704.36,385.71 704.56,386.92 704.76,388.27 704.96,389.77 705.16,391.39 705.36,393.11 705.56,394.92 705.76,396.81 705.96,398.74 706.16,400.71 706.36,402.70 706.56,404.68 706.76,406.64 706.96,408.56 707.16,410.42 707.36,412.19 707.56,413.88 707.76,415.45 707.95,416.89 708.15,418.20 708.35,419.35 708.55,420.33 708.75,421.15 708.95,421.78 709.15,422.23 709.35,422.48 709.55,422.54 709.75,422.41 709.95,422.08 710.15,421.57 710.35,420.87 710.55,419.99 710.75,418.95 710.95,417.75 711.15,416.40 711.35,414.92 711.55,413.31 711.75,411.61 711.95,409.82 712.15,407.96 712.35,406.05 712.55,404.10 712.75,402.15 712.95,400.19 713.15,398.26 713.35,396.38 713.55,394.55 713.75,392.80 713.95,391.15 714.15,389.61 714.35,388.19 714.55,386.92 714.75,385.79 714.95,384.83 715.15,384.04 715.35,383.43 715.54,383.00 715.74,382.76 715.94,382.72 716.14,382.86 716.34,383.20 716.54,383.72 716.74,384.42 716.94,385.30 717.14,386.34 717.34,387.54 717.54,388.88 717.74,390.36 717.94,391.95 718.14,393.64 718.34,395.41 718.54,397.26 718.74,399.15 718.94,401.07 719.14,403.01 719.34,404.94 719.54,406.85 719.74,408.71 719.94,410.51 720.14,412.23 720.34,413.86 720.54,415.38 720.74,416.77 720.94,418.02 721.14,419.12 721.34,420.06 721.54,420.83 721.74,421.42 721.94,421.83 722.14,422.05 722.34,422.08 722.54,421.93 722.74,421.58 722.93,421.05 723.13,420.34 723.33,419.46 723.53,418.42 723.73,417.22 723.93,415.88 724.13,414.41 724.33,412.82 724.53,411.14 724.73,409.38 724.93,407.54 725.13,405.67 725.33,403.76 725.53,401.84 725.73,399.92 725.93,398.04 726.13,396.19 726.33,394.41 726.53,392.71 726.73,391.10 726.93,389.61 727.13,388.24 727.33,387.01 727.53,385.93 727.73,385.01 727.93,384.25 728.13,383.68 728.33,383.29 728.53,383.08 728.73,383.07 728.93,383.24 729.13,383.59 729.33,384.13 729.53,384.85 729.73,385.74 729.93,386.79 730.13,387.99 730.33,389.33 730.52,390.80 730.72,392.38 730.92,394.06 731.12,395.82 731.32,397.64 731.52,399.51 731.72,401.41 731.92,403.32 732.12,405.22 732.32,407.09 732.52,408.91 732.72,410.68 732.92,412.36 733.12,413.95 733.32,415.43 733.52,416.78 733.72,417.99 733.92,419.06 734.12,419.96 734.32,420.69 734.52,421.25 734.72,421.62 734.92,421.81 735.12,421.82 735.32,421.63 735.52,421.26 735.72,420.71 735.92,419.99 736.12,419.09 736.32,418.03 736.52,416.83 736.72,415.48 736.92,414.01 737.12,412.43 737.32,410.76 737.52,409.00 737.72,407.18 737.91,405.32 738.11,403.43 738.31,401.53 738.51,399.64 738.71,397.78 738.91,395.97 739.11,394.22 739.31,392.55 739.51,390.98 739.71,389.51 739.91,388.18 740.11,386.98 740.31,385.94 740.51,385.05 740.71,384.34 740.91,383.80 741.11,383.44 741.31,383.26 741.51,383.28 741.71,383.47 741.91,383.85 742.11,384.42 742.31,385.15 742.51,386.06 742.71,387.12 742.91,388.34 743.11,389.69 743.31,391.16 743.51,392.74 743.71,394.42 743.91,396.17 744.11,397.99 744.31,399.85 744.51,401.73 744.71,403.62 744.91,405.50 745.11,407.35 745.31,409.15 745.50,410.89 745.70,412.55 745.90,414.11 746.10,415.55 746.30,416.87 746.50,418.05 746.70,419.08 746.90,419.95 747.10,420.65 747.30,421.18 747.50,421.52 747.70,421.68 747.90,421.65 748.10,421.44 748.30,421.05 748.50,420.47 748.70,419.72 748.90,418.81 749.10,417.74 749.30,416.52 749.50,415.16 749.70,413.68 749.90,412.10 750.10,410.42 750.30,408.66 750.50,406.85 750.70,404.99 750.90,403.11 751.10,401.23 751.30,399.35 751.50,397.51 751.70,395.72 751.90,393.99 752.10,392.35 752.30,390.80 752.50,389.37 752.70,388.06 752.89,386.90 753.09,385.88 753.29,385.03 753.49,384.34 753.69,383.83 753.89,383.51 754.09,383.36 754.29,383.40 754.49,383.63 754.69,384.04 754.89,384.63 755.09,385.39 755.29,386.31 755.49,387.40 755.69,388.62 755.89,389.99 756.09,391.47 756.29,393.06 756.49,394.74 756.69,396.50 756.89,398.31 757.09,400.17 757.29,402.04 757.49,403.92 757.69,405.79 757.89,407.63 758.09,409.41 758.29,411.13 758.49,412.76 758.69,414.30 758.89,415.72 759.09,417.01 759.29,418.16 759.49,419.16 759.69,420.00 759.89,420.67 760.09,421.16 760.29,421.48 760.48,421.61 760.68,421.55 760.88,421.31 761.08,420.89 761.28,420.29 761.48,419.51 761.68,418.58 761.88,417.48 762.08,416.24 762.28,414.87 762.48,413.38 762.68,411.79 762.88,410.10 763.08,408.34 763.28,406.53 763.48,404.68 763.68,402.80 763.88,400.92 764.08,399.06 764.28,397.23 764.48,395.45 764.68,393.75 764.88,392.12 765.08,390.60 765.28,389.19 765.48,387.91 765.68,386.77 765.88,385.79 766.08,384.96 766.28,384.31 766.48,383.83 766.68,383.53 766.88,383.42 767.08,383.49 767.28,383.75 767.48,384.18 767.68,384.80 767.87,385.58 768.07,386.53 768.27,387.63 768.47,388.88 768.67,390.26 768.87,391.76 769.07,393.36 769.27,395.05 769.47,396.81 769.67,398.63 769.87,400.48 770.07,402.35 770.27,404.23 770.47,406.09 770.67,407.91 770.87,409.68 771.07,411.38 771.27,413.00 771.47,414.51 771.67,415.91 771.87,417.17 772.07,418.30 772.27,419.27 772.47,420.08 772.67,420.72 772.87,421.18 773.07,421.46 773.27,421.56 773.47,421.48 773.67,421.21 773.87,420.75 774.07,420.13 774.27,419.33 774.47,418.37 774.67,417.25 774.87,416.00 775.07,414.61 775.27,413.10 775.46,411.50 775.66,409.80 775.86,408.04 776.06,406.22 776.26,404.36 776.46,402.49 776.66,400.62 776.86,398.76 777.06,396.95 777.26,395.18 777.46,393.49 777.66,391.88 777.86,390.38 778.06,389.00 778.26,387.74 778.46,386.63 778.66,385.67 778.86,384.88 779.06,384.25 779.26,383.80 779.46,383.54 779.66,383.45 779.86,383.55 780.06,383.84 780.26,384.30 780.46,384.95 780.66,385.76 780.86,386.73 781.06,387.86 781.26,389.12 781.46,390.52 781.66,392.03 781.86,393.65 782.06,395.35 782.26,397.12 782.46,398.94 782.66,400.79 782.85,402.66 783.05,404.53 783.25,406.38 783.45,408.20 783.65,409.95 783.85,411.64 784.05,413.24 784.25,414.73 784.45,416.10 784.65,417.35 784.85,418.45 785.05,419.39 785.25,420.17 785.45,420.78 785.65,421.21 785.85,421.47 786.05,421.53 786.25,421.42 786.45,421.12 786.65,420.64 786.85,419.98 787.05,419.16 787.25,418.17 787.45,417.04 787.65,415.76 787.85,414.35 788.05,412.83 788.25,411.21 788.45,409.51 788.65,407.73 788.85,405.91 789.05,404.05 789.25,402.18 789.45,400.31 789.65,398.47 789.85,396.66 790.05,394.91 790.25,393.23 790.44,391.64 790.64,390.16 790.84,388.80 791.04,387.56 791.24,386.48 791.44,385.55 791.64,384.78 791.84,384.19 792.04,383.77 792.24,383.53 792.44,383.48 792.64,383.61 792.84,383.92 793.04,384.42 793.24,385.09 793.44,385.92 793.64,386.92 793.84,388.07 794.04,389.36 794.24,390.77 794.44,392.30 794.64,393.93 794.84,395.64 795.04,397.42 795.24,399.24 795.44,401.10 795.64,402.97 795.84,404.84 796.04,406.68 796.24,408.49 796.44,410.23 796.64,411.90 796.84,413.48 797.04,414.95 797.24,416.31 797.44,417.53 797.64,418.60 797.83,419.52 798.03,420.27 798.23,420.85 798.43,421.25 798.63,421.47 798.83,421.51 799.03,421.37 799.23,421.04 799.43,420.53 799.63,419.85 799.83,419.00 800.03,417.99 800.23,416.82 800.43,415.53 800.63,414.10 800.83,412.56 801.03,410.93 801.23,409.21 801.43,407.43 801.63,405.60 801.83,403.74 802.03,401.87 802.23,400.01 802.43,398.17 802.63,396.37 802.83,394.63 803.03,392.97 803.23,391.40 803.43,389.93 803.63,388.59 803.83,387.38 804.03,386.32 804.23,385.42 804.43,384.68 804.63,384.12 804.83,383.73 805.03,383.52 805.23,383.50 805.42,383.66 805.62,384.00 805.82,384.53 806.02,385.22 806.22,386.09 806.42,387.11 806.62,388.28 806.82,389.59 807.02,391.02 807.22,392.57 807.42,394.21 807.62,395.93 807.82,397.72 808.02,399.55 808.22,401.41 808.42,403.28 808.62,405.14 808.82,406.98 809.02,408.77 809.22,410.51 809.42,412.16 809.62,413.73 809.82,415.18 810.02,416.51 810.22,417.71 810.42,418.75 810.62,419.64 810.82,420.37 811.02,420.92 811.22,421.29 811.42,421.48 811.62,421.49 811.82,421.32 812.02,420.96 812.22,420.42 812.42,419.71 812.62,418.83 812.81,417.80 813.01,416.61 813.21,415.29 813.41,413.85 813.61,412.30 813.81,410.65 814.01,408.92 814.21,407.13 814.41,405.30 814.61,403.44 814.81,401.57 815.01,399.70 815.21,397.87 815.41,396.08 815.61,394.35 815.81,392.71 816.01,391.15 816.21,389.71 816.41,388.39 816.61,387.21 816.81,386.17 817.01,385.29 817.21,384.58 817.41,384.05 817.61,383.69 817.81,383.51 818.01,383.52 818.21,383.71 818.41,384.08 818.61,384.63 818.81,385.36 819.01,386.25 819.21,387.30 819.41,388.49 819.61,389.82 819.81,391.28 820.01,392.84 820.21,394.49 820.40,396.23 820.60,398.02 820.80,399.86 821.00,401.72 821.20,403.59 821.40,405.45 821.60,407.28 821.80,409.06 822.00,410.78 822.20,412.43 822.40,413.97 822.60,415.40 822.80,416.71 823.00,417.88 823.20,418.91 823.40,419.77 823.60,420.47 823.80,420.99 824.00,421.33" fill="none" stroke="#00ffff" stroke-width="2.4" stroke-linejoin="round"/>
<polyline points="524.4,483.8 599.2,483.8 602.8,495.2 605.6,509.9 607.4,510.8 611.6,504.4 614.8,510.8 618.4,520 623,518.5 626.7,521.8 631.8,529.1 636.8,529.7 645,537.4 651.5,540.1 659.7,546.6 665.2,549.3 674.4,556.7 679.9,557.9 692.8,560.9 700,562 715,564.4 728,565 740,565 750,564 770,560 790,554 810,547.6 824,544" fill="none" stroke="#ffff00" stroke-width="2.7" stroke-linejoin="round"/>
<text x="520" y="353.8" font-size="9.5" fill="#f0f0f0" text-anchor="end" >5000</text>
<text x="520" y="405.8" font-size="9.5" fill="#f0f0f0" text-anchor="end" >0</text>
<text x="520" y="457.8" font-size="9.5" fill="#f0f0f0" text-anchor="end" >-5000</text>
<text x="520" y="481.3" font-size="9.5" fill="#f0f0f0" text-anchor="end" >1800</text>
<text x="520" y="507.55" font-size="9.5" fill="#f0f0f0" text-anchor="end" >1750</text>
<text x="520" y="533.8" font-size="9.5" fill="#f0f0f0" text-anchor="end" >1700</text>
<text x="520" y="560.05" font-size="9.5" fill="#f0f0f0" text-anchor="end" >1650</text>
<text x="520" y="586.3" font-size="9.5" fill="#f0f0f0" text-anchor="end" >1600</text>
<text x="524.4" y="595" font-size="9.5" fill="#f0f0f0" text-anchor="middle" >0</text>
<text x="561.85" y="595" font-size="9.5" fill="#f0f0f0" text-anchor="middle" >0.05</text>
<text x="599.3" y="595" font-size="9.5" fill="#f0f0f0" text-anchor="middle" >0.1</text>
<text x="636.75" y="595" font-size="9.5" fill="#f0f0f0" text-anchor="middle" >0.15</text>
<text x="674.2" y="595" font-size="9.5" fill="#f0f0f0" text-anchor="middle" >0.2</text>
<text x="711.65" y="595" font-size="9.5" fill="#f0f0f0" text-anchor="middle" >0.25</text>
<text x="749.1" y="595" font-size="9.5" fill="#f0f0f0" text-anchor="middle" >0.3</text>
<text x="786.55" y="595" font-size="9.5" fill="#f0f0f0" text-anchor="middle" >0.35</text>
<text x="824.0" y="595" font-size="9.5" fill="#f0f0f0" text-anchor="middle" >0.4</text>
<text x="644" y="343.5" font-size="9.5" fill="#f0f0f0" text-anchor="start" textLength="58" lengthAdjust="spacingAndGlyphs">Stator currents</text>
<text x="495.6" y="615" font-size="9.5" fill="#f0f0f0" text-anchor="start" >Time offset:&#160;&#160;0</text>
</svg>
</body></html>
